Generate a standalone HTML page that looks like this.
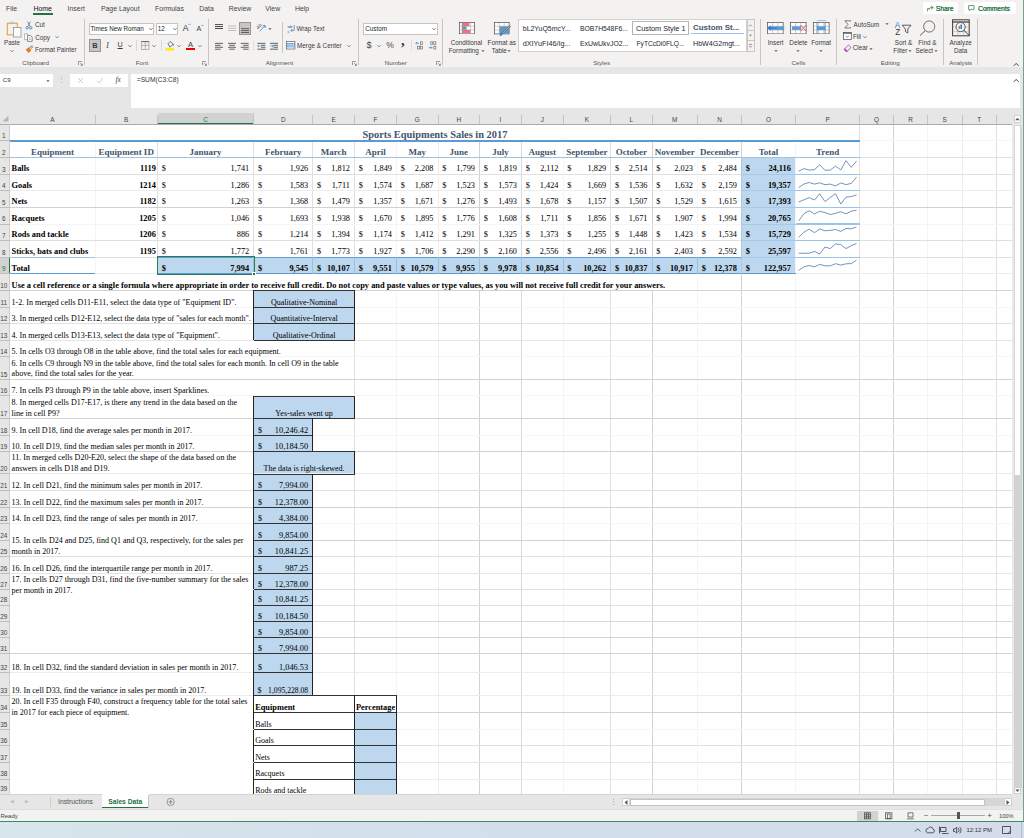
<!DOCTYPE html>
<html lang="en"><head><meta charset="utf-8"><title>Sports Equipments Sales in 2017 - Excel</title>
<style>
html,body{margin:0;padding:0}
body{width:1024px;height:838px;position:relative;overflow:hidden;background:#F3F2F1;font-family:"Liberation Sans",sans-serif;color:#000}
#app div,#app span,#app svg{position:absolute;box-sizing:border-box}
#app span{white-space:nowrap}
.s{font-family:"Liberation Serif",serif;color:#000}
.sb{font-family:"Liberation Serif",serif;font-weight:bold;color:#000}
.u{font-family:"Liberation Sans",sans-serif;color:#333}
.ub{font-family:"Liberation Sans",sans-serif;font-weight:bold;color:#333}
</style></head><body><div id="app">
<span class="u" style="top:4px;line-height:10px;font-size:6.9px;left:6.09px;color:#444;">File</span>
<span class="u" style="top:4px;line-height:10px;font-size:6.9px;left:33.45px;color:#111;">Home</span>
<span class="u" style="top:4px;line-height:10px;font-size:6.9px;left:67.62px;color:#444;">Insert</span>
<span class="u" style="top:4px;line-height:10px;font-size:6.9px;left:100.88px;color:#444;">Page Layout</span>
<span class="u" style="top:4px;line-height:10px;font-size:6.9px;left:155.12px;color:#444;">Formulas</span>
<span class="u" style="top:4px;line-height:10px;font-size:6.9px;left:199.31px;color:#444;">Data</span>
<span class="u" style="top:4px;line-height:10px;font-size:6.9px;left:228.69px;color:#444;">Review</span>
<span class="u" style="top:4px;line-height:10px;font-size:6.9px;left:265.33px;color:#444;">View</span>
<span class="u" style="top:4px;line-height:10px;font-size:6.9px;left:294.95px;color:#444;">Help</span>
<div style="left:33.00px;top:13.45px;width:20.00px;height:1.30px;background:#217346;"></div>
<div style="left:923.30px;top:2.10px;width:34.80px;height:12.00px;background:#fff;border-radius:1.5px;"></div>
<div style="left:964.00px;top:2.10px;width:52.00px;height:12.00px;background:#fff;border-radius:1.5px;"></div>
<svg style="left:926.50px;top:4.50px" width="7" height="7" viewBox="0 0 7 7"><g fill="none" stroke="#217346" stroke-width="0.7"><path d="M0.6 6.4V3.4H2.4M4 0.8L6.2 2.6L4 4.4M6.2 2.6H3.6Q2.4 2.8 2.4 4.6"/></g></svg>
<span class="u" style="top:4px;line-height:10px;font-size:6.6px;left:935.84px;color:#217346;text-shadow:0.2px 0 0 #217346;">Share</span>
<svg style="left:967.70px;top:4.80px" width="7" height="7" viewBox="0 0 7 7"><path d="M0.6 0.6H6V4.4H3L1.6 5.8V4.4H0.6Z" fill="none" stroke="#217346" stroke-width="0.7"/></svg>
<span class="u" style="top:4px;line-height:10px;font-size:6.6px;left:977.95px;color:#217346;text-shadow:0.2px 0 0 #217346;">Comments</span>
<div style="left:84.25px;top:18.50px;width:0.90px;height:46.10px;background:#C8C6C4;"></div>
<div style="left:208.05px;top:18.50px;width:0.90px;height:46.10px;background:#C8C6C4;"></div>
<div style="left:358.25px;top:18.50px;width:0.90px;height:46.10px;background:#C8C6C4;"></div>
<div style="left:441.95px;top:18.50px;width:0.90px;height:46.10px;background:#C8C6C4;"></div>
<div style="left:760.05px;top:18.50px;width:0.90px;height:46.10px;background:#C8C6C4;"></div>
<div style="left:836.05px;top:18.50px;width:0.90px;height:46.10px;background:#C8C6C4;"></div>
<div style="left:943.05px;top:18.50px;width:0.90px;height:46.10px;background:#C8C6C4;"></div>
<div style="left:976.85px;top:18.50px;width:0.90px;height:46.10px;background:#C8C6C4;"></div>
<div style="left:282.15px;top:21.50px;width:0.90px;height:31.20px;background:#C8C6C4;"></div>
<svg style="left:5.50px;top:20.50px" width="16" height="17" viewBox="0 0 16 17"><rect x="1.3" y="2.2" width="10" height="11.6" fill="none" stroke="#E8A33D" stroke-width="1.1"/>
<path d="M4 2.4L6.3 0.6L8.6 2.4Z" fill="#F3F2F1" stroke="#9A9A9A" stroke-width="0.6"/>
<rect x="7.6" y="6.6" width="7.4" height="9.4" fill="#FAFAFA" stroke="#8A8886" stroke-width="0.7"/></svg>
<span class="u" style="top:38px;line-height:9px;font-size:6.3px;left:3.94px;color:#3B3A39;">Paste</span>
<svg style="left:8.50px;top:48.20px" width="6" height="6"><path d="M1.40 2.2L3 3.80L4.60 2.2" fill="none" stroke="#605E5C" stroke-width="0.75"/></svg>
<svg style="left:25.00px;top:20.50px" width="8" height="9" viewBox="0 0 8 9"><path d="M2.6 0.6L5.2 5.6M5.4 0.6L2.8 5.6" stroke="#605E5C" stroke-width="0.7" fill="none"/><circle cx="2.2" cy="6.8" r="1.2" fill="none" stroke="#2B7CD3" stroke-width="0.8"/><circle cx="5.8" cy="6.8" r="1.2" fill="none" stroke="#2B7CD3" stroke-width="0.8"/></svg>
<span class="u" style="top:20px;line-height:9px;font-size:6.3px;left:35.00px;color:#3B3A39;">Cut</span>
<svg style="left:24.00px;top:32.50px" width="10" height="9" viewBox="0 0 10 9"><path d="M0.6 0.8H3.8V6.6H0.6Z" fill="#fff" stroke="#8A8886" stroke-width="0.6"/><path d="M3.6 2.4H6.4L8.2 4.2V8.4H3.6Z" fill="#fff" stroke="#605E5C" stroke-width="0.7"/><path d="M5 5H7M5 6.4H7" stroke="#8A8886" stroke-width="0.5"/></svg>
<span class="u" style="top:33px;line-height:9px;font-size:6.3px;left:35.15px;color:#3B3A39;">Copy</span>
<svg style="left:54.00px;top:34.30px" width="6" height="6"><path d="M1.40 2.2L3 3.80L4.60 2.2" fill="none" stroke="#605E5C" stroke-width="0.75"/></svg>
<svg style="left:24.50px;top:45.00px" width="9" height="9" viewBox="0 0 9 9"><path d="M0.8 4.4L3.8 2.2L6.4 5.6L3.4 8Z" fill="#E97B1F"/><path d="M4.4 2.6L7.4 0.6M5.6 3.6L8.2 1.8" stroke="#605E5C" stroke-width="0.8"/></svg>
<span class="u" style="top:45px;line-height:9px;font-size:6.3px;left:34.97px;color:#3B3A39;">Format Painter</span>
<span class="u" style="top:58px;line-height:9px;font-size:6.2px;left:-264.40px;width:600px;text-align:center;color:#55534F;">Clipboard</span>
<svg style="left:77.50px;top:61.10px" width="5" height="5"><path d="M0.5 4V0.5H4M2.2 2.2L4.4 4.4M4.4 2.6V4.4H2.6" fill="none" stroke="#605E5C" stroke-width="0.6"/></svg>
<div style="left:89.00px;top:22.50px;width:65.20px;height:12.20px;background:#fff;border:0.7px solid #C6C4C2;"></div>
<span class="u" style="top:24px;line-height:9px;font-size:6.3px;left:90.49px;color:#201F1E;">Times New Roman</span>
<svg style="left:148.20px;top:25.60px" width="6" height="6"><path d="M1.40 2.2L3 3.80L4.60 2.2" fill="none" stroke="#444" stroke-width="0.75"/></svg>
<div style="left:156.20px;top:22.50px;width:22.30px;height:12.20px;background:#fff;border:0.7px solid #C6C4C2;"></div>
<span class="u" style="top:24px;line-height:9px;font-size:6.3px;left:157.80px;color:#201F1E;">12</span>
<svg style="left:172.20px;top:25.60px" width="6" height="6"><path d="M1.40 2.2L3 3.80L4.60 2.2" fill="none" stroke="#444" stroke-width="0.75"/></svg>
<span class="u" style="top:22px;line-height:12px;font-size:8.6px;left:-114.50px;width:600px;text-align:center;color:#3B3A39;">A</span>
<svg style="left:188.20px;top:23.30px" width="3" height="3" viewBox="0 0 3 3"><path d="M0.3 2L1.5 0.8L2.7 2" fill="none" stroke="#2B7CD3" stroke-width="0.6"/></svg>
<span class="u" style="top:24px;line-height:10px;font-size:7.2px;left:-101.20px;width:600px;text-align:center;color:#3B3A39;">A</span>
<svg style="left:201.00px;top:23.50px" width="3" height="3" viewBox="0 0 3 3"><path d="M0.3 0.8L1.5 2L2.7 0.8" fill="none" stroke="#2B7CD3" stroke-width="0.6"/></svg>
<div style="left:89.00px;top:39.00px;width:11.70px;height:12.60px;background:#C8C6C4;border:0.7px solid #979593;"></div>
<span class="ub" style="top:40px;line-height:11px;font-size:7.4px;left:-205.20px;width:600px;text-align:center;color:#3B3A39;">B</span>
<span class="s" style="top:40px;line-height:11px;font-size:7.6px;left:-192.40px;width:600px;text-align:center;color:#3B3A39;font-style:italic;">I</span>
<span class="u" style="top:40px;line-height:10px;font-size:7.2px;left:-179.80px;width:600px;text-align:center;color:#3B3A39;text-decoration:underline;">U</span>
<svg style="left:126.60px;top:43.00px" width="6" height="6"><path d="M1.40 2.2L3 3.80L4.60 2.2" fill="none" stroke="#605E5C" stroke-width="0.75"/></svg>
<div style="left:136.10px;top:40.00px;width:0.80px;height:11.00px;background:#DAD8D6;"></div>
<svg style="left:141.00px;top:40.60px" width="9" height="9" viewBox="0 0 9 9"><rect x="0.6" y="0.6" width="7.4" height="8" fill="none" stroke="#9C9A98" stroke-width="0.7"/><path d="M4.3 0.6V8.6M0.6 4.4H8" stroke="#9C9A98" stroke-width="0.7"/><path d="M0.6 0.6H8" stroke="#555" stroke-width="0.8"/></svg>
<svg style="left:151.40px;top:43.00px" width="6" height="6"><path d="M1.40 2.2L3 3.80L4.60 2.2" fill="none" stroke="#605E5C" stroke-width="0.75"/></svg>
<div style="left:161.10px;top:40.00px;width:0.80px;height:11.00px;background:#DAD8D6;"></div>
<svg style="left:165.00px;top:39.50px" width="10" height="11" viewBox="0 0 10 11"><path d="M3 3.6L5.2 1.4L8 4.2L5 7.2Z" fill="none" stroke="#4A4846" stroke-width="0.75"/><path d="M7.6 3.4Q9 5 8.2 6" stroke="#2B7CD3" stroke-width="0.8" fill="none"/><rect x="0.3" y="8.2" width="8.8" height="2.3" fill="#FFEB00"/></svg>
<svg style="left:176.20px;top:43.00px" width="6" height="6"><path d="M1.40 2.2L3 3.80L4.60 2.2" fill="none" stroke="#605E5C" stroke-width="0.75"/></svg>
<span class="u" style="top:39px;line-height:11px;font-size:7.6px;left:-109.40px;width:600px;text-align:center;color:#3B3A39;">A</span>
<div style="left:186.20px;top:47.70px;width:8.80px;height:2.30px;background:#F00000;"></div>
<svg style="left:197.00px;top:43.00px" width="6" height="6"><path d="M1.40 2.2L3 3.80L4.60 2.2" fill="none" stroke="#605E5C" stroke-width="0.75"/></svg>
<span class="u" style="top:58px;line-height:9px;font-size:6.2px;left:-158.00px;width:600px;text-align:center;color:#55534F;">Font</span>
<svg style="left:202.00px;top:61.10px" width="5" height="5"><path d="M0.5 4V0.5H4M2.2 2.2L4.4 4.4M4.4 2.6V4.4H2.6" fill="none" stroke="#605E5C" stroke-width="0.6"/></svg>
<svg style="left:0;top:0" width="1024" height="70"><path d="M215.00 24.60H223.00M215.00 26.55H223.00M215.00 28.50H223.00" stroke="#3B3A39" stroke-width="0.9" fill="none"/></svg>
<svg style="left:0;top:0" width="1024" height="70"><path d="M228.00 25.90H236.00M228.00 28.30H236.00M228.00 30.50H236.00" stroke="#B5B3B1" stroke-width="0.8" fill="none"/></svg>
<div style="left:239.00px;top:22.00px;width:12.00px;height:12.70px;background:#C8C6C4;border:0.7px solid #979593;"></div>
<svg style="left:0;top:0" width="1024" height="70"><path d="M241.00 28.70H249.00M241.00 30.60H249.00M241.00 32.50H249.00" stroke="#55534F" stroke-width="0.9" fill="none"/></svg>
<svg style="left:257.00px;top:23.00px" width="10" height="10" viewBox="0 0 10 10"><text x="0.2" y="5.2" font-size="5" font-family="Liberation Sans, sans-serif" fill="#4A4846" transform="rotate(-35 2 5)">ab</text><path d="M2.6 8.2L8 2.8M8.2 5V2.6H5.8" fill="none" stroke="#2B7CD3" stroke-width="0.8"/></svg>
<svg style="left:266.50px;top:25.80px" width="6" height="6"><path d="M1.4 2.2H4.6L3 4Z" fill="#605E5C"/></svg>
<svg style="left:287.00px;top:23.50px" width="9" height="10" viewBox="0 0 9 10"><text x="0.6" y="3.8" font-size="4.4" font-family="Liberation Sans, sans-serif" fill="#4A4846">ab</text><text x="0.6" y="8.6" font-size="4.4" font-family="Liberation Sans, sans-serif" fill="#4A4846">c</text><path d="M7.2 1V6.4H3.8M5.2 5L3.8 6.4L5.2 7.8" fill="none" stroke="#2B7CD3" stroke-width="0.7"/></svg>
<span class="u" style="top:24px;line-height:9px;font-size:6.3px;left:296.44px;color:#3B3A39;">Wrap Text</span>
<svg style="left:0;top:0" width="1024" height="70"><path d="M215.00 43.35H223.00M215.00 45.30H220.60M215.00 47.25H223.00M215.00 49.20H220.60" stroke="#4A4846" stroke-width="0.85" fill="none"/></svg>
<svg style="left:0;top:0" width="1024" height="70"><path d="M228.00 43.35H236.00M229.20 45.30H234.80M228.00 47.25H236.00M229.20 49.20H234.80" stroke="#4A4846" stroke-width="0.85" fill="none"/></svg>
<svg style="left:0;top:0" width="1024" height="70"><path d="M240.70 43.35H248.70M243.10 45.30H248.70M240.70 47.25H248.70M243.10 49.20H248.70" stroke="#4A4846" stroke-width="0.85" fill="none"/></svg>
<div style="left:253.20px;top:40.00px;width:0.80px;height:11.00px;background:#E1DFDD;"></div>
<svg style="left:0;top:0" width="1024" height="70"><path d="M257.40 43.35H265.40M257.40 49.20H265.40" stroke="#4A4846" stroke-width="0.85" fill="none"/></svg>
<svg style="left:0;top:0" width="1024" height="70"><path d="M261.00 45.30H265.40M261.00 47.25H265.40" stroke="#4A4846" stroke-width="0.85" fill="none"/></svg>
<svg style="left:257.00px;top:44.30px" width="4" height="4" viewBox="0 0 4 4"><path d="M3.6 2H0.6M1.8 0.8L0.6 2L1.8 3.2" fill="none" stroke="#2B7CD3" stroke-width="0.7"/></svg>
<svg style="left:0;top:0" width="1024" height="70"><path d="M270.00 43.35H278.00M270.00 49.20H278.00" stroke="#4A4846" stroke-width="0.85" fill="none"/></svg>
<svg style="left:0;top:0" width="1024" height="70"><path d="M273.60 45.30H278.00M273.60 47.25H278.00" stroke="#4A4846" stroke-width="0.85" fill="none"/></svg>
<svg style="left:269.60px;top:44.30px" width="4" height="4" viewBox="0 0 4 4"><path d="M0.4 2H3.4M2.2 0.8L3.4 2L2.2 3.2" fill="none" stroke="#2B7CD3" stroke-width="0.7"/></svg>
<svg style="left:286.00px;top:40.60px" width="10" height="9" viewBox="0 0 10 9"><rect x="0.5" y="0.6" width="8.4" height="7.4" fill="#fff" stroke="#605E5C" stroke-width="0.7"/><rect x="1" y="2.4" width="7.4" height="3.6" fill="#DCEBFA" stroke="#2B7CD3" stroke-width="0.6"/><path d="M2.4 4.2H7M3.4 3.2L2.4 4.2L3.4 5.2M6 3.2L7 4.2L6 5.2" fill="none" stroke="#2B7CD3" stroke-width="0.5"/></svg>
<span class="u" style="top:41px;line-height:9px;font-size:6.3px;left:297.06px;color:#3B3A39;">Merge &amp; Center</span>
<svg style="left:346.40px;top:43.00px" width="6" height="6"><path d="M1.40 2.2L3 3.80L4.60 2.2" fill="none" stroke="#605E5C" stroke-width="0.75"/></svg>
<span class="u" style="top:58px;line-height:9px;font-size:6.2px;left:-20.60px;width:600px;text-align:center;color:#55534F;">Alignment</span>
<svg style="left:351.80px;top:61.10px" width="5" height="5"><path d="M0.5 4V0.5H4M2.2 2.2L4.4 4.4M4.4 2.6V4.4H2.6" fill="none" stroke="#605E5C" stroke-width="0.6"/></svg>
<div style="left:363.10px;top:22.50px;width:74.70px;height:12.20px;background:#fff;border:0.7px solid #C6C4C2;"></div>
<span class="u" style="top:24px;line-height:9px;font-size:6.3px;left:365.20px;color:#201F1E;">Custom</span>
<svg style="left:431.40px;top:25.60px" width="6" height="6"><path d="M1.40 2.2L3 3.80L4.60 2.2" fill="none" stroke="#444" stroke-width="0.75"/></svg>
<span class="u" style="top:39px;line-height:13px;font-size:9.2px;left:69.00px;width:600px;text-align:center;color:#4A4846;">$</span>
<svg style="left:375.50px;top:43.00px" width="6" height="6"><path d="M1.40 2.2L3 3.80L4.60 2.2" fill="none" stroke="#605E5C" stroke-width="0.75"/></svg>
<span class="u" style="top:39px;line-height:12px;font-size:8.6px;left:90.00px;width:600px;text-align:center;color:#4A4846;">%</span>
<span class="sb" style="top:30px;line-height:20px;font-size:15px;left:102.80px;width:600px;text-align:center;color:#3B3A39;">,</span>
<div style="left:411.10px;top:40.00px;width:0.80px;height:11.00px;background:#E1DFDD;"></div>
<svg style="left:414.60px;top:40.60px" width="9" height="10" viewBox="0 0 9 10"><path d="M4 2.2H0.8M2 1L0.8 2.2L2 3.4" fill="none" stroke="#2B7CD3" stroke-width="0.7"/><g fill="none" stroke="#605E5C" stroke-width="0.6"><rect x="5.4" y="0.8" width="2" height="2.8"/><rect x="2.6" y="5.2" width="2" height="2.8"/><rect x="5.6" y="5.2" width="2" height="2.8"/></g></svg>
<svg style="left:427.60px;top:40.60px" width="9" height="10" viewBox="0 0 9 10"><path d="M0.8 6.6H4M2.8 5.4L4 6.6L2.8 7.8" fill="none" stroke="#2B7CD3" stroke-width="0.7"/><g fill="none" stroke="#605E5C" stroke-width="0.6"><rect x="2.8" y="0.8" width="2" height="2.8"/><rect x="5.8" y="0.8" width="2" height="2.8"/><rect x="5.8" y="5.2" width="2" height="2.8"/></g></svg>
<span class="u" style="top:58px;line-height:9px;font-size:6.2px;left:95.80px;width:600px;text-align:center;color:#55534F;">Number</span>
<svg style="left:435.50px;top:61.10px" width="5" height="5"><path d="M0.5 4V0.5H4M2.2 2.2L4.4 4.4M4.4 2.6V4.4H2.6" fill="none" stroke="#605E5C" stroke-width="0.6"/></svg>
<svg style="left:458.50px;top:21.80px" width="16" height="12.5" viewBox="0 0 16 12.5"><rect x="0.5" y="0.5" width="15" height="11.4" fill="#fff" stroke="#4A4846" stroke-width="0.7"/>
<rect x="3" y="0.8" width="7.4" height="3.4" fill="#F1707B"/><rect x="3" y="4.4" width="4.6" height="3.4" fill="#5B9BD5"/><rect x="3" y="8" width="8.4" height="3.4" fill="#F1707B"/>
<path d="M3 0.5V11.9M11.6 0.5V11.9M0.5 4.3H15.5M0.5 7.9H15.5" stroke="#8A8886" stroke-width="0.4" fill="none"/></svg>
<span class="u" style="top:38px;line-height:9px;font-size:6.3px;left:450.74px;color:#3B3A39;">Conditional</span>
<span class="u" style="top:46px;line-height:9px;font-size:6.3px;left:448.74px;color:#3B3A39;">Formatting</span>
<svg style="left:479.60px;top:48.20px" width="6" height="6"><path d="M1.4 2.2H4.6L3 4Z" fill="#605E5C"/></svg>
<svg style="left:493.50px;top:21.80px" width="18" height="15" viewBox="0 0 18 15"><rect x="0.5" y="0.5" width="14.6" height="11.4" fill="#fff" stroke="#4A4846" stroke-width="0.7"/>
<rect x="5.4" y="4.3" width="9.6" height="7.4" fill="#5B9BD5"/>
<path d="M5.4 0.5V11.9M10.2 0.5V11.9M0.5 4.3H15M0.5 8H15" stroke="#8A8886" stroke-width="0.4" fill="none"/>
<path d="M16.4 3.8L8.4 11.4" stroke="#605E5C" stroke-width="1.6"/><path d="M16.4 3.8L8.4 11.4" stroke="#EDEBE9" stroke-width="0.6"/><path d="M8.6 11L6 13.6" stroke="#2B7CD3" stroke-width="1.8"/></svg>
<span class="u" style="top:38px;line-height:9px;font-size:6.3px;left:487.62px;color:#3B3A39;">Format as</span>
<span class="u" style="top:46px;line-height:9px;font-size:6.3px;left:491.77px;color:#3B3A39;">Table</span>
<svg style="left:506.30px;top:48.20px" width="6" height="6"><path d="M1.4 2.2H4.6L3 4Z" fill="#605E5C"/></svg>
<div style="left:518.00px;top:19.30px;width:228.60px;height:32.90px;background:#fff;border:0.6px solid #D2D0CE;"></div>
<div style="left:746.50px;top:19.30px;width:8.00px;height:32.90px;background:#F3F2F1;border:0.6px solid #C8C6C4;"></div>
<div style="left:746.50px;top:29.95px;width:8.00px;height:0.70px;background:#C8C6C4;"></div>
<div style="left:746.50px;top:39.95px;width:8.00px;height:0.70px;background:#C8C6C4;"></div>
<svg style="left:748.00px;top:22.60px" width="5" height="5" viewBox="0 0 5 5"><path d="M1 3.4L2.5 1.8L4 3.4" fill="none" stroke="#605E5C" stroke-width="0.6"/></svg>
<svg style="left:748.00px;top:33.00px" width="5" height="5" viewBox="0 0 5 5"><path d="M1.2 1.8H3.8L2.5 3.2Z" fill="#605E5C"/></svg>
<svg style="left:748.00px;top:43.00px" width="5" height="7" viewBox="0 0 5 7"><path d="M1 1.4H4" stroke="#605E5C" stroke-width="0.6"/><path d="M1 2.8L2.5 4.4L4 2.8" fill="none" stroke="#605E5C" stroke-width="0.6"/></svg>
<span class="u" style="top:24px;line-height:10px;font-size:6.94px;left:522.80px;color:#23262F;">bL2YuQ5mcY...</span>
<span class="u" style="top:24px;line-height:10px;font-size:6.8px;left:580.00px;color:#23262F;">BOB7H548F6...</span>
<span class="u" style="top:23px;line-height:11px;font-size:7.3px;left:636.00px;color:#23262F;">Custom Style 1</span>
<div style="left:632.30px;top:20.90px;width:56.60px;height:14.60px;border:0.9px solid #B4B4B4;"></div>
<span class="ub" style="top:22px;line-height:11px;font-size:7.95px;left:693.00px;color:#44546A;">Custom St...</span>
<div style="left:691.20px;top:33.05px;width:52.80px;height:0.90px;background:#9DC3E6;"></div>
<span class="u" style="top:38px;line-height:11px;font-size:7.21px;left:522.80px;color:#23262F;">dXIYuFI46/Ig...</span>
<span class="u" style="top:39px;line-height:10px;font-size:6.93px;left:580.00px;color:#23262F;">ExUwUkvJO2...</span>
<span class="u" style="top:39px;line-height:10px;font-size:6.65px;left:636.50px;color:#23262F;">FyTCcDi0FLQ...</span>
<span class="u" style="top:39px;line-height:10px;font-size:7.11px;left:693.00px;color:#23262F;">HbW4G2mgt...</span>
<span class="u" style="top:58px;line-height:9px;font-size:6.2px;left:301.60px;width:600px;text-align:center;color:#55534F;">Styles</span>
<svg style="left:767.30px;top:21.80px" width="18" height="12.5" viewBox="0 0 18 12.5"><rect x="0.5" y="0.5" width="15.6" height="11.4" fill="#fff" stroke="#4A4846" stroke-width="0.7"/>
<path d="M5.6 0.5V11.9M10.9 0.5V11.9M0.5 4.3H16.1M0.5 8H16.1" stroke="#8A8886" stroke-width="0.45" fill="none"/><rect x="2.6" y="4.4" width="14.6" height="3.5" fill="#5B9BD5"/><path d="M3.6 3.4L0.2 6.1L3.6 8.8Z" fill="#2B7CD3"/><path d="M0.4 6.1H10" stroke="#2B7CD3" stroke-width="1.2"/></svg>
<svg style="left:790.40px;top:21.80px" width="18" height="12.5" viewBox="0 0 18 12.5"><rect x="0.5" y="0.5" width="15.6" height="11.4" fill="#fff" stroke="#4A4846" stroke-width="0.7"/>
<path d="M5.6 0.5V11.9M10.9 0.5V11.9M0.5 4.3H16.1M0.5 8H16.1" stroke="#8A8886" stroke-width="0.45" fill="none"/><rect x="2" y="4.4" width="9" height="3.5" fill="#5B9BD5"/><path d="M10.4 3L16.4 9.4M16.4 3L10.4 9.4" stroke="#E8505B" stroke-width="0.9"/></svg>
<svg style="left:812.80px;top:21.80px" width="18" height="12.5" viewBox="0 0 18 12.5"><rect x="0.5" y="0.5" width="15.6" height="11.4" fill="#fff" stroke="#4A4846" stroke-width="0.7"/>
<path d="M5.6 0.5V11.9M10.9 0.5V11.9M0.5 4.3H16.1M0.5 8H16.1" stroke="#8A8886" stroke-width="0.45" fill="none"/><rect x="4" y="4.4" width="8.2" height="3.6" fill="#5B9BD5"/><path d="M4 0.5V11.9M12.2 0.5V11.9" stroke="#2B7CD3" stroke-width="0.7"/></svg>
<div style="left:816.50px;top:19.65px;width:9.00px;height:0.70px;background:#9DC3E6;"></div>
<span class="u" style="top:38px;line-height:9px;font-size:6.3px;left:767.87px;color:#3B3A39;">Insert</span>
<span class="u" style="top:38px;line-height:9px;font-size:6.3px;left:789.34px;color:#3B3A39;">Delete</span>
<span class="u" style="top:38px;line-height:9px;font-size:6.3px;left:811.17px;color:#3B3A39;">Format</span>
<svg style="left:772.60px;top:48.20px" width="6" height="6"><path d="M1.4 2.2H4.6L3 4Z" fill="#605E5C"/></svg>
<svg style="left:795.10px;top:48.20px" width="6" height="6"><path d="M1.4 2.2H4.6L3 4Z" fill="#605E5C"/></svg>
<svg style="left:817.90px;top:48.20px" width="6" height="6"><path d="M1.4 2.2H4.6L3 4Z" fill="#605E5C"/></svg>
<span class="u" style="top:58px;line-height:9px;font-size:6.2px;left:498.50px;width:600px;text-align:center;color:#55534F;">Cells</span>
<svg style="left:843.50px;top:20.00px" width="8" height="9" viewBox="0 0 8 9"><path d="M6.6 1.6V0.8H0.8L4 4.4L0.8 8H6.6V7.2" fill="none" stroke="#4A4846" stroke-width="0.7"/></svg>
<span class="u" style="top:20px;line-height:9px;font-size:6.3px;left:853.44px;color:#3B3A39;">AutoSum</span>
<svg style="left:883.60px;top:21.20px" width="6" height="6"><path d="M1.4 2.2H4.6L3 4Z" fill="#605E5C"/></svg>
<svg style="left:842.80px;top:31.80px" width="9" height="8" viewBox="0 0 9 8"><rect x="0.5" y="0.5" width="7.8" height="7" fill="#fff" stroke="#4A4846" stroke-width="0.7"/><path d="M0.5 1.2H8.3" stroke="#4A4846" stroke-width="1"/><path d="M3 3.8L4.4 5.4L5.8 3.8" fill="none" stroke="#2B7CD3" stroke-width="0.8"/></svg>
<span class="u" style="top:32px;line-height:9px;font-size:6.3px;left:852.98px;color:#3B3A39;">Fill</span>
<svg style="left:861.60px;top:33.80px" width="6" height="6"><path d="M1.40 2.2L3 3.80L4.60 2.2" fill="none" stroke="#605E5C" stroke-width="0.75"/></svg>
<svg style="left:842.80px;top:43.50px" width="9" height="9" viewBox="0 0 9 9"><path d="M1 5.4L5.6 1L8 3.4L3.6 8Z" fill="#F7E8FA" stroke="#A33BB8" stroke-width="0.8"/><path d="M1 5.4L3.6 8L4.6 7L2 4.4Z" fill="#A33BB8"/></svg>
<span class="u" style="top:43px;line-height:9px;font-size:6.3px;left:852.72px;color:#3B3A39;">Clear</span>
<svg style="left:868.00px;top:45.50px" width="6" height="6"><path d="M1.4 2.2H4.6L3 4Z" fill="#605E5C"/></svg>
<svg style="left:894.00px;top:19.50px" width="18" height="17" viewBox="0 0 18 17"><text x="0.8" y="8" font-size="8.2" font-family="Liberation Sans, sans-serif" fill="#2B7CD3">A</text><text x="1.2" y="15.4" font-size="8.2" font-family="Liberation Sans, sans-serif" fill="#3B3A39">Z</text><path d="M8.2 5.2H17L13.8 9V13L11.4 11.6V9Z" fill="none" stroke="#3B3A39" stroke-width="0.8"/></svg>
<span class="u" style="top:38px;line-height:9px;font-size:6.3px;left:894.75px;color:#3B3A39;">Sort &amp;</span>
<span class="u" style="top:46px;line-height:9px;font-size:6.3px;left:893.30px;color:#3B3A39;">Filter</span>
<svg style="left:907.40px;top:47.90px" width="6" height="6"><path d="M1.4 2.2H4.6L3 4Z" fill="#605E5C"/></svg>
<svg style="left:918.50px;top:19.50px" width="18" height="17" viewBox="0 0 18 17"><circle cx="10.2" cy="6.5" r="5.6" fill="none" stroke="#4A4846" stroke-width="0.75"/><path d="M6.2 10.6L1 15.6" stroke="#4A4846" stroke-width="0.9"/></svg>
<span class="u" style="top:38px;line-height:9px;font-size:6.3px;left:918.25px;color:#3B3A39;">Find &amp;</span>
<span class="u" style="top:46px;line-height:9px;font-size:6.3px;left:915.54px;color:#3B3A39;">Select</span>
<svg style="left:932.60px;top:47.90px" width="6" height="6"><path d="M1.4 2.2H4.6L3 4Z" fill="#605E5C"/></svg>
<span class="u" style="top:58px;line-height:9px;font-size:6.2px;left:590.20px;width:600px;text-align:center;color:#55534F;">Editing</span>
<svg style="left:951.50px;top:18.80px" width="19" height="18" viewBox="0 0 19 18"><rect x="0.6" y="0.8" width="16.6" height="16" fill="#F3F2F1" stroke="#3B3A39" stroke-width="1"/>
<path d="M0.6 3H17.2" stroke="#3B3A39" stroke-width="1.2"/>
<path d="M6 3V16.8M11.6 3V16.8M0.6 8H17.2M0.6 12.6H17.2" stroke="#A19F9D" stroke-width="0.5"/>
<circle cx="8.6" cy="8" r="4.6" fill="#F3F2F1" stroke="#3B3A39" stroke-width="0.8"/>
<rect x="6.6" y="7" width="1.4" height="3" fill="#8A8886"/><rect x="8.4" y="5.6" width="1.6" height="4.4" fill="#2B7CD3"/>
<path d="M12 11.4L17.4 16.6" stroke="#3B3A39" stroke-width="0.9"/></svg>
<span class="u" style="top:38px;line-height:9px;font-size:6.3px;left:949.39px;color:#3B3A39;">Analyze</span>
<span class="u" style="top:46px;line-height:9px;font-size:6.3px;left:954.05px;color:#3B3A39;">Data</span>
<span class="u" style="top:58px;line-height:9px;font-size:6.2px;left:660.70px;width:600px;text-align:center;color:#55534F;">Analysis</span>
<svg style="left:1013.00px;top:61.80px" width="7" height="5" viewBox="0 0 7 5"><path d="M0.8 3.8L3.2 1.4L5.6 3.8" fill="none" stroke="#333" stroke-width="0.95"/></svg>
<div style="left:0.00px;top:67.40px;width:1024.00px;height:46.00px;background:#E6E6E6;"></div>
<div style="left:0.00px;top:67.20px;width:1024.00px;height:1.20px;background:linear-gradient(#EDECEB,#E2E1E0);"></div>
<div style="left:0.00px;top:73.70px;width:53.00px;height:13.40px;background:#fff;"></div>
<span class="u" style="top:75px;line-height:9px;font-size:6.1px;left:2.80px;color:#333;">C9</span>
<svg style="left:44.60px;top:77.60px" width="6" height="6"><path d="M1.4 2.2H4.6L3 4Z" fill="#555"/></svg>
<span class="u" style="top:75px;line-height:10px;font-size:7px;left:-238.60px;width:600px;text-align:center;color:#A6A6A6;">⋮</span>
<div style="left:69.50px;top:73.70px;width:58.50px;height:13.40px;background:#fff;"></div>
<svg style="left:76.50px;top:77.20px" width="7" height="7" viewBox="0 0 7 7"><path d="M1 1L6 6M6 1L1 6" stroke="#B8B8B8" stroke-width="0.7"/></svg>
<svg style="left:95.50px;top:77.20px" width="8" height="7" viewBox="0 0 8 7"><path d="M1 3.8L3 5.8L7 1" fill="none" stroke="#B8B8B8" stroke-width="0.7"/></svg>
<span class="s" style="top:74px;line-height:11px;font-size:7.4px;left:-181.80px;width:600px;text-align:center;color:#444;font-style:italic;">fx</span>
<div style="left:130.50px;top:73.70px;width:889.00px;height:34.80px;background:#fff;"></div>
<span class="u" style="top:75px;line-height:10px;font-size:6.66px;left:136.80px;color:#333;">=SUM(C3:C8)</span>
<svg style="left:1013.00px;top:78.00px" width="7" height="5" viewBox="0 0 7 5"><path d="M0.8 3.8L3.2 1.4L5.6 3.8" fill="none" stroke="#333" stroke-width="0.95"/></svg>
<div style="left:0.00px;top:113.00px;width:1012.00px;height:681.00px;background:#fff;"></div>
<div style="left:157.50px;top:257.20px;width:638.00px;height:16.40px;background:#BDD7EE;"></div>
<div style="left:741.50px;top:157.70px;width:54.00px;height:115.90px;background:#BDD7EE;"></div>
<div style="left:253.75px;top:290.40px;width:100.75px;height:16.80px;background:#BDD7EE;"></div>
<div style="left:253.75px;top:307.20px;width:100.75px;height:16.00px;background:#BDD7EE;"></div>
<div style="left:253.75px;top:323.20px;width:100.75px;height:17.15px;background:#BDD7EE;"></div>
<div style="left:253.75px;top:395.90px;width:100.75px;height:22.30px;background:#BDD7EE;"></div>
<div style="left:253.75px;top:451.40px;width:100.75px;height:22.50px;background:#BDD7EE;"></div>
<div style="left:253.75px;top:418.20px;width:59.05px;height:17.10px;background:#BDD7EE;"></div>
<div style="left:253.75px;top:435.30px;width:59.05px;height:16.10px;background:#BDD7EE;"></div>
<div style="left:253.75px;top:473.90px;width:59.05px;height:16.80px;background:#BDD7EE;"></div>
<div style="left:253.75px;top:490.70px;width:59.05px;height:16.60px;background:#BDD7EE;"></div>
<div style="left:253.75px;top:507.30px;width:59.05px;height:16.50px;background:#BDD7EE;"></div>
<div style="left:253.75px;top:523.80px;width:59.05px;height:16.30px;background:#BDD7EE;"></div>
<div style="left:253.75px;top:540.10px;width:59.05px;height:16.10px;background:#BDD7EE;"></div>
<div style="left:253.75px;top:556.20px;width:59.05px;height:17.10px;background:#BDD7EE;"></div>
<div style="left:253.75px;top:573.30px;width:59.05px;height:16.20px;background:#BDD7EE;"></div>
<div style="left:253.75px;top:589.50px;width:59.05px;height:15.60px;background:#BDD7EE;"></div>
<div style="left:253.75px;top:605.10px;width:59.05px;height:16.20px;background:#BDD7EE;"></div>
<div style="left:253.75px;top:621.30px;width:59.05px;height:16.30px;background:#BDD7EE;"></div>
<div style="left:253.75px;top:637.60px;width:59.05px;height:16.10px;background:#BDD7EE;"></div>
<div style="left:253.75px;top:653.70px;width:59.05px;height:18.60px;background:#BDD7EE;"></div>
<div style="left:253.75px;top:672.30px;width:59.05px;height:23.40px;background:#BDD7EE;"></div>
<div style="left:354.50px;top:712.30px;width:42.00px;height:81.70px;background:#BDD7EE;"></div>
<div style="left:94.50px;top:124.00px;width:1.00px;height:0.20px;background:#F5F5F5;"></div>
<div style="left:94.50px;top:140.70px;width:1.00px;height:132.90px;background:#F5F5F5;"></div>
<div style="left:157.00px;top:124.00px;width:1.00px;height:0.20px;background:#E0E0E0;"></div>
<div style="left:157.00px;top:140.70px;width:1.00px;height:132.90px;background:#E0E0E0;"></div>
<div style="left:253.25px;top:124.00px;width:1.00px;height:0.20px;background:#E0E0E0;"></div>
<div style="left:253.25px;top:140.70px;width:1.00px;height:132.90px;background:#E0E0E0;"></div>
<div style="left:253.25px;top:290.40px;width:1.00px;height:49.95px;background:#E0E0E0;"></div>
<div style="left:253.25px;top:395.90px;width:1.00px;height:398.10px;background:#E0E0E0;"></div>
<div style="left:312.30px;top:124.00px;width:1.00px;height:0.20px;background:#E0E0E0;"></div>
<div style="left:312.30px;top:140.70px;width:1.00px;height:132.90px;background:#E0E0E0;"></div>
<div style="left:312.30px;top:418.20px;width:1.00px;height:33.20px;background:#E0E0E0;"></div>
<div style="left:312.30px;top:473.90px;width:1.00px;height:221.80px;background:#E0E0E0;"></div>
<div style="left:354.00px;top:124.00px;width:1.00px;height:0.20px;background:#E0E0E0;"></div>
<div style="left:354.00px;top:140.70px;width:1.00px;height:132.90px;background:#E0E0E0;"></div>
<div style="left:354.00px;top:290.40px;width:1.00px;height:503.60px;background:#E0E0E0;"></div>
<div style="left:396.00px;top:124.00px;width:1.00px;height:0.20px;background:#F5F5F5;"></div>
<div style="left:396.00px;top:140.70px;width:1.00px;height:132.90px;background:#F5F5F5;"></div>
<div style="left:396.00px;top:290.40px;width:1.00px;height:503.60px;background:#F5F5F5;"></div>
<div style="left:437.50px;top:124.00px;width:1.00px;height:0.20px;background:#ECECEC;"></div>
<div style="left:437.50px;top:140.70px;width:1.00px;height:132.90px;background:#ECECEC;"></div>
<div style="left:437.50px;top:290.40px;width:1.00px;height:503.60px;background:#ECECEC;"></div>
<div style="left:479.00px;top:124.00px;width:1.00px;height:0.20px;background:#D2D2D2;"></div>
<div style="left:479.00px;top:140.70px;width:1.00px;height:132.90px;background:#D2D2D2;"></div>
<div style="left:479.00px;top:290.40px;width:1.00px;height:503.60px;background:#D2D2D2;"></div>
<div style="left:521.00px;top:124.00px;width:1.00px;height:0.20px;background:#D9D9D9;"></div>
<div style="left:521.00px;top:140.70px;width:1.00px;height:132.90px;background:#D9D9D9;"></div>
<div style="left:521.00px;top:290.40px;width:1.00px;height:503.60px;background:#D9D9D9;"></div>
<div style="left:562.50px;top:124.00px;width:1.00px;height:0.20px;background:#F5F5F5;"></div>
<div style="left:562.50px;top:140.70px;width:1.00px;height:132.90px;background:#F5F5F5;"></div>
<div style="left:562.50px;top:290.40px;width:1.00px;height:503.60px;background:#F5F5F5;"></div>
<div style="left:610.25px;top:124.00px;width:1.00px;height:0.20px;background:#E0E0E0;"></div>
<div style="left:610.25px;top:140.70px;width:1.00px;height:132.90px;background:#E0E0E0;"></div>
<div style="left:610.25px;top:290.40px;width:1.00px;height:503.60px;background:#E0E0E0;"></div>
<div style="left:651.50px;top:124.00px;width:1.00px;height:0.20px;background:#D2D2D2;"></div>
<div style="left:651.50px;top:140.70px;width:1.00px;height:132.90px;background:#D2D2D2;"></div>
<div style="left:651.50px;top:290.40px;width:1.00px;height:503.60px;background:#D2D2D2;"></div>
<div style="left:697.00px;top:124.00px;width:1.00px;height:0.20px;background:#F5F5F5;"></div>
<div style="left:697.00px;top:140.70px;width:1.00px;height:653.30px;background:#F5F5F5;"></div>
<div style="left:741.00px;top:124.00px;width:1.00px;height:0.20px;background:#D2D2D2;"></div>
<div style="left:741.00px;top:140.70px;width:1.00px;height:653.30px;background:#D2D2D2;"></div>
<div style="left:795.00px;top:124.00px;width:1.00px;height:0.20px;background:#F5F5F5;"></div>
<div style="left:795.00px;top:140.70px;width:1.00px;height:653.30px;background:#F5F5F5;"></div>
<div style="left:859.25px;top:124.00px;width:1.00px;height:670.00px;background:#E0E0E0;"></div>
<div style="left:893.00px;top:124.00px;width:1.00px;height:670.00px;background:#D2D2D2;"></div>
<div style="left:927.00px;top:124.00px;width:1.00px;height:670.00px;background:#F5F5F5;"></div>
<div style="left:961.50px;top:124.00px;width:1.00px;height:670.00px;background:#ECECEC;"></div>
<div style="left:996.00px;top:124.00px;width:1.00px;height:670.00px;background:#E0E0E0;"></div>
<div style="left:10.00px;top:140.20px;width:1002.00px;height:1.00px;background:#F5F5F5;"></div>
<div style="left:10.00px;top:157.20px;width:1002.00px;height:1.00px;background:#E0E0E0;"></div>
<div style="left:10.00px;top:173.75px;width:1002.00px;height:1.00px;background:#E0E0E0;"></div>
<div style="left:10.00px;top:190.20px;width:1002.00px;height:1.00px;background:#ECECEC;"></div>
<div style="left:10.00px;top:206.70px;width:1002.00px;height:1.00px;background:#D2D2D2;"></div>
<div style="left:10.00px;top:223.50px;width:1002.00px;height:1.00px;background:#F5F5F5;"></div>
<div style="left:10.00px;top:239.95px;width:1002.00px;height:1.00px;background:#E0E0E0;"></div>
<div style="left:10.00px;top:256.70px;width:1002.00px;height:1.00px;background:#E0E0E0;"></div>
<div style="left:10.00px;top:273.10px;width:1002.00px;height:1.00px;background:#ECECEC;"></div>
<div style="left:10.00px;top:289.90px;width:1002.00px;height:1.00px;background:#D2D2D2;"></div>
<div style="left:10.00px;top:306.70px;width:1002.00px;height:1.00px;background:#F5F5F5;"></div>
<div style="left:10.00px;top:322.70px;width:1002.00px;height:1.00px;background:#E0E0E0;"></div>
<div style="left:10.00px;top:339.85px;width:1002.00px;height:1.00px;background:#E6E6E6;"></div>
<div style="left:10.00px;top:356.30px;width:1002.00px;height:1.00px;background:#F5F5F5;"></div>
<div style="left:10.00px;top:378.70px;width:1002.00px;height:1.00px;background:#D2D2D2;"></div>
<div style="left:10.00px;top:395.40px;width:1002.00px;height:1.00px;background:#F5F5F5;"></div>
<div style="left:10.00px;top:417.70px;width:1002.00px;height:1.00px;background:#D2D2D2;"></div>
<div style="left:10.00px;top:434.80px;width:1002.00px;height:1.00px;background:#F5F5F5;"></div>
<div style="left:10.00px;top:450.90px;width:1002.00px;height:1.00px;background:#D2D2D2;"></div>
<div style="left:10.00px;top:473.40px;width:1002.00px;height:1.00px;background:#ECECEC;"></div>
<div style="left:10.00px;top:490.20px;width:1002.00px;height:1.00px;background:#E0E0E0;"></div>
<div style="left:10.00px;top:506.80px;width:1002.00px;height:1.00px;background:#D2D2D2;"></div>
<div style="left:10.00px;top:523.30px;width:1002.00px;height:1.00px;background:#F5F5F5;"></div>
<div style="left:253.75px;top:539.60px;width:758.25px;height:1.00px;background:#D2D2D2;"></div>
<div style="left:10.00px;top:555.70px;width:1002.00px;height:1.00px;background:#E0E0E0;"></div>
<div style="left:10.00px;top:572.80px;width:1002.00px;height:1.00px;background:#E6E6E6;"></div>
<div style="left:253.75px;top:589.00px;width:758.25px;height:1.00px;background:#E0E0E0;"></div>
<div style="left:253.75px;top:604.60px;width:758.25px;height:1.00px;background:#E0E0E0;"></div>
<div style="left:253.75px;top:620.80px;width:758.25px;height:1.00px;background:#D9D9D9;"></div>
<div style="left:253.75px;top:637.10px;width:758.25px;height:1.00px;background:#D2D2D2;"></div>
<div style="left:10.00px;top:653.20px;width:1002.00px;height:1.00px;background:#D2D2D2;"></div>
<div style="left:10.00px;top:671.80px;width:1002.00px;height:1.00px;background:#ECECEC;"></div>
<div style="left:10.00px;top:695.20px;width:1002.00px;height:1.00px;background:#ECECEC;"></div>
<div style="left:253.75px;top:711.80px;width:758.25px;height:1.00px;background:#D2D2D2;"></div>
<div style="left:253.75px;top:729.00px;width:758.25px;height:1.00px;background:#F5F5F5;"></div>
<div style="left:253.75px;top:745.30px;width:758.25px;height:1.00px;background:#E0E0E0;"></div>
<div style="left:253.75px;top:762.00px;width:758.25px;height:1.00px;background:#E6E6E6;"></div>
<div style="left:253.75px;top:778.50px;width:758.25px;height:1.00px;background:#ECECEC;"></div>
<div style="left:10.00px;top:139.70px;width:849.75px;height:2.20px;background:#5B9BD5;"></div>
<div style="left:10.00px;top:157.05px;width:849.75px;height:1.30px;background:#9DC3E6;"></div>
<div style="left:10.00px;top:256.65px;width:85.00px;height:1.30px;background:#9DC3E6;"></div>
<div style="left:10.00px;top:272.60px;width:85.00px;height:1.80px;background:#5B9BD5;"></div>
<div style="left:157.50px;top:256.70px;width:638.00px;height:1.20px;background:#5B9BD5;"></div>
<div style="left:157.50px;top:272.60px;width:638.00px;height:1.80px;background:#5B9BD5;"></div>
<div style="left:253.25px;top:257.20px;width:1.00px;height:16.40px;background:#9BBFE0;"></div>
<div style="left:312.30px;top:257.20px;width:1.00px;height:16.40px;background:#9BBFE0;"></div>
<div style="left:354.00px;top:257.20px;width:1.00px;height:16.40px;background:#9BBFE0;"></div>
<div style="left:396.00px;top:257.20px;width:1.00px;height:16.40px;background:#9BBFE0;"></div>
<div style="left:437.50px;top:257.20px;width:1.00px;height:16.40px;background:#9BBFE0;"></div>
<div style="left:479.00px;top:257.20px;width:1.00px;height:16.40px;background:#9BBFE0;"></div>
<div style="left:521.00px;top:257.20px;width:1.00px;height:16.40px;background:#9BBFE0;"></div>
<div style="left:562.50px;top:257.20px;width:1.00px;height:16.40px;background:#9BBFE0;"></div>
<div style="left:610.25px;top:257.20px;width:1.00px;height:16.40px;background:#9BBFE0;"></div>
<div style="left:651.50px;top:257.20px;width:1.00px;height:16.40px;background:#9BBFE0;"></div>
<div style="left:697.00px;top:257.20px;width:1.00px;height:16.40px;background:#9BBFE0;"></div>
<div style="left:741.00px;top:257.20px;width:1.00px;height:16.40px;background:#9BBFE0;"></div>
<div style="left:741.50px;top:173.75px;width:54.00px;height:1.00px;background:#A9C9E8;"></div>
<div style="left:795.50px;top:173.65px;width:64.25px;height:1.20px;background:#9DC3E6;"></div>
<div style="left:741.50px;top:190.20px;width:54.00px;height:1.00px;background:#A9C9E8;"></div>
<div style="left:795.50px;top:190.10px;width:64.25px;height:1.20px;background:#9DC3E6;"></div>
<div style="left:741.50px;top:206.70px;width:54.00px;height:1.00px;background:#A9C9E8;"></div>
<div style="left:795.50px;top:206.60px;width:64.25px;height:1.20px;background:#9DC3E6;"></div>
<div style="left:741.50px;top:223.50px;width:54.00px;height:1.00px;background:#A9C9E8;"></div>
<div style="left:795.50px;top:223.40px;width:64.25px;height:1.20px;background:#9DC3E6;"></div>
<div style="left:741.50px;top:239.95px;width:54.00px;height:1.00px;background:#A9C9E8;"></div>
<div style="left:795.50px;top:239.85px;width:64.25px;height:1.20px;background:#9DC3E6;"></div>
<div style="left:741.50px;top:256.70px;width:54.00px;height:1.00px;background:#A9C9E8;"></div>
<div style="left:795.50px;top:256.60px;width:64.25px;height:1.20px;background:#9DC3E6;"></div>
<div style="left:741.00px;top:157.70px;width:1.00px;height:115.90px;background:#A9C9E8;"></div>
<div style="left:253.75px;top:290.00px;width:101.25px;height:0.80px;background:#333;"></div>
<div style="left:253.75px;top:306.80px;width:101.25px;height:0.80px;background:#333;"></div>
<div style="left:253.25px;top:290.40px;width:1.00px;height:16.80px;background:#222;"></div>
<div style="left:354.00px;top:290.40px;width:1.00px;height:16.80px;background:#222;"></div>
<div style="left:253.75px;top:306.80px;width:101.25px;height:0.80px;background:#333;"></div>
<div style="left:253.75px;top:322.80px;width:101.25px;height:0.80px;background:#333;"></div>
<div style="left:253.25px;top:307.20px;width:1.00px;height:16.00px;background:#222;"></div>
<div style="left:354.00px;top:307.20px;width:1.00px;height:16.00px;background:#222;"></div>
<div style="left:253.75px;top:322.80px;width:101.25px;height:0.80px;background:#333;"></div>
<div style="left:253.75px;top:339.95px;width:101.25px;height:0.80px;background:#333;"></div>
<div style="left:253.25px;top:323.20px;width:1.00px;height:17.15px;background:#222;"></div>
<div style="left:354.00px;top:323.20px;width:1.00px;height:17.15px;background:#222;"></div>
<div style="left:253.75px;top:395.50px;width:101.25px;height:0.80px;background:#333;"></div>
<div style="left:253.75px;top:417.80px;width:101.25px;height:0.80px;background:#333;"></div>
<div style="left:253.25px;top:395.90px;width:1.00px;height:22.30px;background:#222;"></div>
<div style="left:354.00px;top:395.90px;width:1.00px;height:22.30px;background:#222;"></div>
<div style="left:253.75px;top:451.00px;width:101.25px;height:0.80px;background:#333;"></div>
<div style="left:253.75px;top:473.50px;width:101.25px;height:0.80px;background:#333;"></div>
<div style="left:253.25px;top:451.40px;width:1.00px;height:22.50px;background:#222;"></div>
<div style="left:354.00px;top:451.40px;width:1.00px;height:22.50px;background:#222;"></div>
<div style="left:253.75px;top:417.80px;width:59.55px;height:0.80px;background:#333;"></div>
<div style="left:253.75px;top:434.90px;width:59.55px;height:0.80px;background:#333;"></div>
<div style="left:253.25px;top:418.20px;width:1.00px;height:17.10px;background:#222;"></div>
<div style="left:312.30px;top:418.20px;width:1.00px;height:17.10px;background:#222;"></div>
<div style="left:253.75px;top:434.90px;width:59.55px;height:0.80px;background:#333;"></div>
<div style="left:253.75px;top:451.00px;width:59.55px;height:0.80px;background:#333;"></div>
<div style="left:253.25px;top:435.30px;width:1.00px;height:16.10px;background:#222;"></div>
<div style="left:312.30px;top:435.30px;width:1.00px;height:16.10px;background:#222;"></div>
<div style="left:253.75px;top:473.50px;width:59.55px;height:0.80px;background:#333;"></div>
<div style="left:253.75px;top:490.30px;width:59.55px;height:0.80px;background:#333;"></div>
<div style="left:253.25px;top:473.90px;width:1.00px;height:16.80px;background:#222;"></div>
<div style="left:312.30px;top:473.90px;width:1.00px;height:16.80px;background:#222;"></div>
<div style="left:253.75px;top:490.30px;width:59.55px;height:0.80px;background:#333;"></div>
<div style="left:253.75px;top:506.90px;width:59.55px;height:0.80px;background:#333;"></div>
<div style="left:253.25px;top:490.70px;width:1.00px;height:16.60px;background:#222;"></div>
<div style="left:312.30px;top:490.70px;width:1.00px;height:16.60px;background:#222;"></div>
<div style="left:253.75px;top:506.90px;width:59.55px;height:0.80px;background:#333;"></div>
<div style="left:253.75px;top:523.40px;width:59.55px;height:0.80px;background:#333;"></div>
<div style="left:253.25px;top:507.30px;width:1.00px;height:16.50px;background:#222;"></div>
<div style="left:312.30px;top:507.30px;width:1.00px;height:16.50px;background:#222;"></div>
<div style="left:253.75px;top:523.40px;width:59.55px;height:0.80px;background:#333;"></div>
<div style="left:253.75px;top:539.70px;width:59.55px;height:0.80px;background:#333;"></div>
<div style="left:253.25px;top:523.80px;width:1.00px;height:16.30px;background:#222;"></div>
<div style="left:312.30px;top:523.80px;width:1.00px;height:16.30px;background:#222;"></div>
<div style="left:253.75px;top:539.70px;width:59.55px;height:0.80px;background:#333;"></div>
<div style="left:253.75px;top:555.80px;width:59.55px;height:0.80px;background:#333;"></div>
<div style="left:253.25px;top:540.10px;width:1.00px;height:16.10px;background:#222;"></div>
<div style="left:312.30px;top:540.10px;width:1.00px;height:16.10px;background:#222;"></div>
<div style="left:253.75px;top:555.80px;width:59.55px;height:0.80px;background:#333;"></div>
<div style="left:253.75px;top:572.90px;width:59.55px;height:0.80px;background:#333;"></div>
<div style="left:253.25px;top:556.20px;width:1.00px;height:17.10px;background:#222;"></div>
<div style="left:312.30px;top:556.20px;width:1.00px;height:17.10px;background:#222;"></div>
<div style="left:253.75px;top:572.90px;width:59.55px;height:0.80px;background:#333;"></div>
<div style="left:253.75px;top:589.10px;width:59.55px;height:0.80px;background:#333;"></div>
<div style="left:253.25px;top:573.30px;width:1.00px;height:16.20px;background:#222;"></div>
<div style="left:312.30px;top:573.30px;width:1.00px;height:16.20px;background:#222;"></div>
<div style="left:253.75px;top:589.10px;width:59.55px;height:0.80px;background:#333;"></div>
<div style="left:253.75px;top:604.70px;width:59.55px;height:0.80px;background:#333;"></div>
<div style="left:253.25px;top:589.50px;width:1.00px;height:15.60px;background:#222;"></div>
<div style="left:312.30px;top:589.50px;width:1.00px;height:15.60px;background:#222;"></div>
<div style="left:253.75px;top:604.70px;width:59.55px;height:0.80px;background:#333;"></div>
<div style="left:253.75px;top:620.90px;width:59.55px;height:0.80px;background:#333;"></div>
<div style="left:253.25px;top:605.10px;width:1.00px;height:16.20px;background:#222;"></div>
<div style="left:312.30px;top:605.10px;width:1.00px;height:16.20px;background:#222;"></div>
<div style="left:253.75px;top:620.90px;width:59.55px;height:0.80px;background:#333;"></div>
<div style="left:253.75px;top:637.20px;width:59.55px;height:0.80px;background:#333;"></div>
<div style="left:253.25px;top:621.30px;width:1.00px;height:16.30px;background:#222;"></div>
<div style="left:312.30px;top:621.30px;width:1.00px;height:16.30px;background:#222;"></div>
<div style="left:253.75px;top:637.20px;width:59.55px;height:0.80px;background:#333;"></div>
<div style="left:253.75px;top:653.30px;width:59.55px;height:0.80px;background:#333;"></div>
<div style="left:253.25px;top:637.60px;width:1.00px;height:16.10px;background:#222;"></div>
<div style="left:312.30px;top:637.60px;width:1.00px;height:16.10px;background:#222;"></div>
<div style="left:253.75px;top:653.30px;width:59.55px;height:0.80px;background:#333;"></div>
<div style="left:253.75px;top:671.90px;width:59.55px;height:0.80px;background:#333;"></div>
<div style="left:253.25px;top:653.70px;width:1.00px;height:18.60px;background:#222;"></div>
<div style="left:312.30px;top:653.70px;width:1.00px;height:18.60px;background:#222;"></div>
<div style="left:253.75px;top:671.90px;width:59.55px;height:0.80px;background:#333;"></div>
<div style="left:253.75px;top:695.30px;width:59.55px;height:0.80px;background:#333;"></div>
<div style="left:253.25px;top:672.30px;width:1.00px;height:23.40px;background:#222;"></div>
<div style="left:312.30px;top:672.30px;width:1.00px;height:23.40px;background:#222;"></div>
<div style="left:253.75px;top:695.30px;width:101.25px;height:0.80px;background:#333;"></div>
<div style="left:253.75px;top:711.90px;width:101.25px;height:0.80px;background:#333;"></div>
<div style="left:253.25px;top:695.70px;width:1.00px;height:16.60px;background:#222;"></div>
<div style="left:354.00px;top:695.70px;width:1.00px;height:16.60px;background:#222;"></div>
<div style="left:354.50px;top:695.30px;width:42.50px;height:0.80px;background:#333;"></div>
<div style="left:354.50px;top:711.90px;width:42.50px;height:0.80px;background:#333;"></div>
<div style="left:354.00px;top:695.70px;width:1.00px;height:16.60px;background:#222;"></div>
<div style="left:396.00px;top:695.70px;width:1.00px;height:16.60px;background:#222;"></div>
<div style="left:253.75px;top:711.90px;width:101.25px;height:0.80px;background:#333;"></div>
<div style="left:253.75px;top:729.10px;width:101.25px;height:0.80px;background:#333;"></div>
<div style="left:253.25px;top:712.30px;width:1.00px;height:17.20px;background:#222;"></div>
<div style="left:354.00px;top:712.30px;width:1.00px;height:17.20px;background:#222;"></div>
<div style="left:354.50px;top:711.90px;width:42.50px;height:0.80px;background:#333;"></div>
<div style="left:354.50px;top:729.10px;width:42.50px;height:0.80px;background:#333;"></div>
<div style="left:354.00px;top:712.30px;width:1.00px;height:17.20px;background:#222;"></div>
<div style="left:396.00px;top:712.30px;width:1.00px;height:17.20px;background:#222;"></div>
<div style="left:253.75px;top:729.10px;width:101.25px;height:0.80px;background:#333;"></div>
<div style="left:253.75px;top:745.40px;width:101.25px;height:0.80px;background:#333;"></div>
<div style="left:253.25px;top:729.50px;width:1.00px;height:16.30px;background:#222;"></div>
<div style="left:354.00px;top:729.50px;width:1.00px;height:16.30px;background:#222;"></div>
<div style="left:354.50px;top:729.10px;width:42.50px;height:0.80px;background:#333;"></div>
<div style="left:354.50px;top:745.40px;width:42.50px;height:0.80px;background:#333;"></div>
<div style="left:354.00px;top:729.50px;width:1.00px;height:16.30px;background:#222;"></div>
<div style="left:396.00px;top:729.50px;width:1.00px;height:16.30px;background:#222;"></div>
<div style="left:253.75px;top:745.40px;width:101.25px;height:0.80px;background:#333;"></div>
<div style="left:253.75px;top:762.10px;width:101.25px;height:0.80px;background:#333;"></div>
<div style="left:253.25px;top:745.80px;width:1.00px;height:16.70px;background:#222;"></div>
<div style="left:354.00px;top:745.80px;width:1.00px;height:16.70px;background:#222;"></div>
<div style="left:354.50px;top:745.40px;width:42.50px;height:0.80px;background:#333;"></div>
<div style="left:354.50px;top:762.10px;width:42.50px;height:0.80px;background:#333;"></div>
<div style="left:354.00px;top:745.80px;width:1.00px;height:16.70px;background:#222;"></div>
<div style="left:396.00px;top:745.80px;width:1.00px;height:16.70px;background:#222;"></div>
<div style="left:253.75px;top:762.10px;width:101.25px;height:0.80px;background:#333;"></div>
<div style="left:253.75px;top:778.60px;width:101.25px;height:0.80px;background:#333;"></div>
<div style="left:253.25px;top:762.50px;width:1.00px;height:16.50px;background:#222;"></div>
<div style="left:354.00px;top:762.50px;width:1.00px;height:16.50px;background:#222;"></div>
<div style="left:354.50px;top:762.10px;width:42.50px;height:0.80px;background:#333;"></div>
<div style="left:354.50px;top:778.60px;width:42.50px;height:0.80px;background:#333;"></div>
<div style="left:354.00px;top:762.50px;width:1.00px;height:16.50px;background:#222;"></div>
<div style="left:396.00px;top:762.50px;width:1.00px;height:16.50px;background:#222;"></div>
<div style="left:253.25px;top:779.00px;width:1.00px;height:15.00px;background:#222;"></div>
<div style="left:354.00px;top:779.00px;width:1.00px;height:15.00px;background:#222;"></div>
<div style="left:396.00px;top:779.00px;width:1.00px;height:15.00px;background:#222;"></div>
<div style="left:156.50px;top:256.20px;width:96.25px;height:16.40px;border:1.3px solid #2C7B52;box-sizing:content-box"></div>
<div style="left:252.25px;top:272.10px;width:3.60px;height:3.60px;background:#217346;border:0.6px solid #fff;"></div>
<div style="left:0.00px;top:113.00px;width:1012.00px;height:11.00px;background:#E6E6E6;"></div>
<div style="left:0.00px;top:124.00px;width:9.60px;height:670.00px;background:#E6E6E6;"></div>
<div style="left:0.00px;top:123.50px;width:1012.00px;height:1.00px;background:#ABABAB;"></div>
<div style="left:9.10px;top:124.00px;width:0.80px;height:670.00px;background:#CDCDCD;"></div>
<div style="left:157.50px;top:113.00px;width:96.25px;height:10.50px;background:#D2D2D2;"></div>
<div style="left:157.50px;top:122.90px;width:96.25px;height:1.40px;background:#217346;"></div>
<div style="left:0.00px;top:257.20px;width:9.20px;height:16.40px;background:#D2D2D2;"></div>
<div style="left:8.90px;top:257.20px;width:1.20px;height:16.40px;background:#217346;"></div>
<svg style="left:2px;top:115px" width="7" height="7"><path d="M6.5 0.5V6.5H0.5Z" fill="#B7B7B7"/></svg>
<span class="u" style="top:115px;line-height:9px;font-size:6.4px;left:-247.50px;width:600px;text-align:center;color:#444;">A</span>
<div style="left:94.50px;top:115.00px;width:1.00px;height:8.50px;background:#C4C4C4;"></div>
<span class="u" style="top:115px;line-height:9px;font-size:6.4px;left:-173.75px;width:600px;text-align:center;color:#444;">B</span>
<div style="left:157.00px;top:115.00px;width:1.00px;height:8.50px;background:#C4C4C4;"></div>
<span class="u" style="top:115px;line-height:9px;font-size:6.4px;left:-94.38px;width:600px;text-align:center;color:#217346;">C</span>
<div style="left:253.25px;top:115.00px;width:1.00px;height:8.50px;background:#C4C4C4;"></div>
<span class="u" style="top:115px;line-height:9px;font-size:6.4px;left:-16.73px;width:600px;text-align:center;color:#444;">D</span>
<div style="left:312.30px;top:115.00px;width:1.00px;height:8.50px;background:#C4C4C4;"></div>
<span class="u" style="top:115px;line-height:9px;font-size:6.4px;left:33.65px;width:600px;text-align:center;color:#444;">E</span>
<div style="left:354.00px;top:115.00px;width:1.00px;height:8.50px;background:#C4C4C4;"></div>
<span class="u" style="top:115px;line-height:9px;font-size:6.4px;left:75.50px;width:600px;text-align:center;color:#444;">F</span>
<div style="left:396.00px;top:115.00px;width:1.00px;height:8.50px;background:#C4C4C4;"></div>
<span class="u" style="top:115px;line-height:9px;font-size:6.4px;left:117.25px;width:600px;text-align:center;color:#444;">G</span>
<div style="left:437.50px;top:115.00px;width:1.00px;height:8.50px;background:#C4C4C4;"></div>
<span class="u" style="top:115px;line-height:9px;font-size:6.4px;left:158.75px;width:600px;text-align:center;color:#444;">H</span>
<div style="left:479.00px;top:115.00px;width:1.00px;height:8.50px;background:#C4C4C4;"></div>
<span class="u" style="top:115px;line-height:9px;font-size:6.4px;left:200.50px;width:600px;text-align:center;color:#444;">I</span>
<div style="left:521.00px;top:115.00px;width:1.00px;height:8.50px;background:#C4C4C4;"></div>
<span class="u" style="top:115px;line-height:9px;font-size:6.4px;left:242.25px;width:600px;text-align:center;color:#444;">J</span>
<div style="left:562.50px;top:115.00px;width:1.00px;height:8.50px;background:#C4C4C4;"></div>
<span class="u" style="top:115px;line-height:9px;font-size:6.4px;left:286.88px;width:600px;text-align:center;color:#444;">K</span>
<div style="left:610.25px;top:115.00px;width:1.00px;height:8.50px;background:#C4C4C4;"></div>
<span class="u" style="top:115px;line-height:9px;font-size:6.4px;left:331.38px;width:600px;text-align:center;color:#444;">L</span>
<div style="left:651.50px;top:115.00px;width:1.00px;height:8.50px;background:#C4C4C4;"></div>
<span class="u" style="top:115px;line-height:9px;font-size:6.4px;left:374.75px;width:600px;text-align:center;color:#444;">M</span>
<div style="left:697.00px;top:115.00px;width:1.00px;height:8.50px;background:#C4C4C4;"></div>
<span class="u" style="top:115px;line-height:9px;font-size:6.4px;left:419.50px;width:600px;text-align:center;color:#444;">N</span>
<div style="left:741.00px;top:115.00px;width:1.00px;height:8.50px;background:#C4C4C4;"></div>
<span class="u" style="top:115px;line-height:9px;font-size:6.4px;left:468.50px;width:600px;text-align:center;color:#444;">O</span>
<div style="left:795.00px;top:115.00px;width:1.00px;height:8.50px;background:#C4C4C4;"></div>
<span class="u" style="top:115px;line-height:9px;font-size:6.4px;left:527.62px;width:600px;text-align:center;color:#444;">P</span>
<div style="left:859.25px;top:115.00px;width:1.00px;height:8.50px;background:#C4C4C4;"></div>
<span class="u" style="top:115px;line-height:9px;font-size:6.4px;left:576.62px;width:600px;text-align:center;color:#444;">Q</span>
<div style="left:893.00px;top:115.00px;width:1.00px;height:8.50px;background:#C4C4C4;"></div>
<span class="u" style="top:115px;line-height:9px;font-size:6.4px;left:610.50px;width:600px;text-align:center;color:#444;">R</span>
<div style="left:927.00px;top:115.00px;width:1.00px;height:8.50px;background:#C4C4C4;"></div>
<span class="u" style="top:115px;line-height:9px;font-size:6.4px;left:644.75px;width:600px;text-align:center;color:#444;">S</span>
<div style="left:961.50px;top:115.00px;width:1.00px;height:8.50px;background:#C4C4C4;"></div>
<span class="u" style="top:115px;line-height:9px;font-size:6.4px;left:679.25px;width:600px;text-align:center;color:#444;">T</span>
<div style="left:996.00px;top:115.00px;width:1.00px;height:8.50px;background:#C4C4C4;"></div>
<span class="u" style="top:131px;line-height:9px;font-size:6.4px;left:-296.20px;width:600px;text-align:center;color:#444;">1</span>
<div style="left:0.00px;top:140.20px;width:9.60px;height:1.00px;background:#BEBEBE;"></div>
<span class="u" style="top:148px;line-height:9px;font-size:6.4px;left:-296.20px;width:600px;text-align:center;color:#444;">2</span>
<div style="left:0.00px;top:157.20px;width:9.60px;height:1.00px;background:#BEBEBE;"></div>
<span class="u" style="top:165px;line-height:9px;font-size:6.4px;left:-296.20px;width:600px;text-align:center;color:#444;">3</span>
<div style="left:0.00px;top:173.75px;width:9.60px;height:1.00px;background:#BEBEBE;"></div>
<span class="u" style="top:181px;line-height:9px;font-size:6.4px;left:-296.20px;width:600px;text-align:center;color:#444;">4</span>
<div style="left:0.00px;top:190.20px;width:9.60px;height:1.00px;background:#BEBEBE;"></div>
<span class="u" style="top:198px;line-height:9px;font-size:6.4px;left:-296.20px;width:600px;text-align:center;color:#444;">5</span>
<div style="left:0.00px;top:206.70px;width:9.60px;height:1.00px;background:#BEBEBE;"></div>
<span class="u" style="top:214px;line-height:9px;font-size:6.4px;left:-296.20px;width:600px;text-align:center;color:#444;">6</span>
<div style="left:0.00px;top:223.50px;width:9.60px;height:1.00px;background:#BEBEBE;"></div>
<span class="u" style="top:231px;line-height:9px;font-size:6.4px;left:-296.20px;width:600px;text-align:center;color:#444;">7</span>
<div style="left:0.00px;top:239.95px;width:9.60px;height:1.00px;background:#BEBEBE;"></div>
<span class="u" style="top:248px;line-height:9px;font-size:6.4px;left:-296.20px;width:600px;text-align:center;color:#444;">8</span>
<div style="left:0.00px;top:256.70px;width:9.60px;height:1.00px;background:#BEBEBE;"></div>
<span class="u" style="top:264px;line-height:9px;font-size:6.4px;left:-296.20px;width:600px;text-align:center;color:#217346;">9</span>
<div style="left:0.00px;top:273.10px;width:9.60px;height:1.00px;background:#BEBEBE;"></div>
<span class="u" style="top:281px;line-height:9px;font-size:6.4px;left:-296.20px;width:600px;text-align:center;color:#444;">10</span>
<div style="left:0.00px;top:289.90px;width:9.60px;height:1.00px;background:#BEBEBE;"></div>
<span class="u" style="top:298px;line-height:9px;font-size:6.4px;left:-296.20px;width:600px;text-align:center;color:#444;">11</span>
<div style="left:0.00px;top:306.70px;width:9.60px;height:1.00px;background:#BEBEBE;"></div>
<span class="u" style="top:314px;line-height:9px;font-size:6.4px;left:-296.20px;width:600px;text-align:center;color:#444;">12</span>
<div style="left:0.00px;top:322.70px;width:9.60px;height:1.00px;background:#BEBEBE;"></div>
<span class="u" style="top:331px;line-height:9px;font-size:6.4px;left:-296.20px;width:600px;text-align:center;color:#444;">13</span>
<div style="left:0.00px;top:339.85px;width:9.60px;height:1.00px;background:#BEBEBE;"></div>
<span class="u" style="top:347px;line-height:9px;font-size:6.4px;left:-296.20px;width:600px;text-align:center;color:#444;">14</span>
<div style="left:0.00px;top:356.30px;width:9.60px;height:1.00px;background:#BEBEBE;"></div>
<span class="u" style="top:370px;line-height:9px;font-size:6.4px;left:-296.20px;width:600px;text-align:center;color:#444;">15</span>
<div style="left:0.00px;top:378.70px;width:9.60px;height:1.00px;background:#BEBEBE;"></div>
<span class="u" style="top:386px;line-height:9px;font-size:6.4px;left:-296.20px;width:600px;text-align:center;color:#444;">16</span>
<div style="left:0.00px;top:395.40px;width:9.60px;height:1.00px;background:#BEBEBE;"></div>
<span class="u" style="top:409px;line-height:9px;font-size:6.4px;left:-296.20px;width:600px;text-align:center;color:#444;">17</span>
<div style="left:0.00px;top:417.70px;width:9.60px;height:1.00px;background:#BEBEBE;"></div>
<span class="u" style="top:426px;line-height:9px;font-size:6.4px;left:-296.20px;width:600px;text-align:center;color:#444;">18</span>
<div style="left:0.00px;top:434.80px;width:9.60px;height:1.00px;background:#BEBEBE;"></div>
<span class="u" style="top:442px;line-height:9px;font-size:6.4px;left:-296.20px;width:600px;text-align:center;color:#444;">19</span>
<div style="left:0.00px;top:450.90px;width:9.60px;height:1.00px;background:#BEBEBE;"></div>
<span class="u" style="top:464px;line-height:9px;font-size:6.4px;left:-296.20px;width:600px;text-align:center;color:#444;">20</span>
<div style="left:0.00px;top:473.40px;width:9.60px;height:1.00px;background:#BEBEBE;"></div>
<span class="u" style="top:481px;line-height:9px;font-size:6.4px;left:-296.20px;width:600px;text-align:center;color:#444;">21</span>
<div style="left:0.00px;top:490.20px;width:9.60px;height:1.00px;background:#BEBEBE;"></div>
<span class="u" style="top:498px;line-height:9px;font-size:6.4px;left:-296.20px;width:600px;text-align:center;color:#444;">22</span>
<div style="left:0.00px;top:506.80px;width:9.60px;height:1.00px;background:#BEBEBE;"></div>
<span class="u" style="top:514px;line-height:9px;font-size:6.4px;left:-296.20px;width:600px;text-align:center;color:#444;">23</span>
<div style="left:0.00px;top:523.30px;width:9.60px;height:1.00px;background:#BEBEBE;"></div>
<span class="u" style="top:531px;line-height:9px;font-size:6.4px;left:-296.20px;width:600px;text-align:center;color:#444;">24</span>
<div style="left:0.00px;top:539.60px;width:9.60px;height:1.00px;background:#BEBEBE;"></div>
<span class="u" style="top:547px;line-height:9px;font-size:6.4px;left:-296.20px;width:600px;text-align:center;color:#444;">25</span>
<div style="left:0.00px;top:555.70px;width:9.60px;height:1.00px;background:#BEBEBE;"></div>
<span class="u" style="top:564px;line-height:9px;font-size:6.4px;left:-296.20px;width:600px;text-align:center;color:#444;">26</span>
<div style="left:0.00px;top:572.80px;width:9.60px;height:1.00px;background:#BEBEBE;"></div>
<span class="u" style="top:580px;line-height:9px;font-size:6.4px;left:-296.20px;width:600px;text-align:center;color:#444;">27</span>
<div style="left:0.00px;top:589.00px;width:9.60px;height:1.00px;background:#BEBEBE;"></div>
<span class="u" style="top:595px;line-height:9px;font-size:6.4px;left:-296.20px;width:600px;text-align:center;color:#444;">28</span>
<div style="left:0.00px;top:604.60px;width:9.60px;height:1.00px;background:#BEBEBE;"></div>
<span class="u" style="top:612px;line-height:9px;font-size:6.4px;left:-296.20px;width:600px;text-align:center;color:#444;">29</span>
<div style="left:0.00px;top:620.80px;width:9.60px;height:1.00px;background:#BEBEBE;"></div>
<span class="u" style="top:628px;line-height:9px;font-size:6.4px;left:-296.20px;width:600px;text-align:center;color:#444;">30</span>
<div style="left:0.00px;top:637.10px;width:9.60px;height:1.00px;background:#BEBEBE;"></div>
<span class="u" style="top:644px;line-height:9px;font-size:6.4px;left:-296.20px;width:600px;text-align:center;color:#444;">31</span>
<div style="left:0.00px;top:653.20px;width:9.60px;height:1.00px;background:#BEBEBE;"></div>
<span class="u" style="top:663px;line-height:9px;font-size:6.4px;left:-296.20px;width:600px;text-align:center;color:#444;">32</span>
<div style="left:0.00px;top:671.80px;width:9.60px;height:1.00px;background:#BEBEBE;"></div>
<span class="u" style="top:686px;line-height:9px;font-size:6.4px;left:-296.20px;width:600px;text-align:center;color:#444;">33</span>
<div style="left:0.00px;top:695.20px;width:9.60px;height:1.00px;background:#BEBEBE;"></div>
<span class="u" style="top:703px;line-height:9px;font-size:6.4px;left:-296.20px;width:600px;text-align:center;color:#444;">34</span>
<div style="left:0.00px;top:711.80px;width:9.60px;height:1.00px;background:#BEBEBE;"></div>
<span class="u" style="top:720px;line-height:9px;font-size:6.4px;left:-296.20px;width:600px;text-align:center;color:#444;">35</span>
<div style="left:0.00px;top:729.00px;width:9.60px;height:1.00px;background:#BEBEBE;"></div>
<span class="u" style="top:736px;line-height:9px;font-size:6.4px;left:-296.20px;width:600px;text-align:center;color:#444;">36</span>
<div style="left:0.00px;top:745.30px;width:9.60px;height:1.00px;background:#BEBEBE;"></div>
<span class="u" style="top:753px;line-height:9px;font-size:6.4px;left:-296.20px;width:600px;text-align:center;color:#444;">37</span>
<div style="left:0.00px;top:762.00px;width:9.60px;height:1.00px;background:#BEBEBE;"></div>
<span class="u" style="top:769px;line-height:9px;font-size:6.4px;left:-296.20px;width:600px;text-align:center;color:#444;">38</span>
<div style="left:0.00px;top:778.50px;width:9.60px;height:1.00px;background:#BEBEBE;"></div>
<span class="u" style="top:784px;line-height:9px;font-size:6.4px;left:-296.20px;width:600px;text-align:center;color:#444;">39</span>
<span class="sb" style="top:128px;line-height:14px;font-size:10.4px;left:134.88px;width:600px;text-align:center;color:#44546A;">Sports Equipments Sales in 2017</span>
<span class="sb" style="top:146px;line-height:13px;font-size:9.0px;left:-247.50px;width:600px;text-align:center;color:#44546A;">Equipment</span>
<span class="sb" style="top:146px;line-height:13px;font-size:9.0px;left:-173.75px;width:600px;text-align:center;color:#44546A;">Equipment ID</span>
<span class="sb" style="top:146px;line-height:13px;font-size:9.0px;left:-94.38px;width:600px;text-align:center;color:#44546A;">January</span>
<span class="sb" style="top:146px;line-height:13px;font-size:9.0px;left:-16.73px;width:600px;text-align:center;color:#44546A;">February</span>
<span class="sb" style="top:146px;line-height:13px;font-size:9.0px;left:33.65px;width:600px;text-align:center;color:#44546A;">March</span>
<span class="sb" style="top:146px;line-height:13px;font-size:9.0px;left:75.50px;width:600px;text-align:center;color:#44546A;">April</span>
<span class="sb" style="top:146px;line-height:13px;font-size:9.0px;left:117.25px;width:600px;text-align:center;color:#44546A;">May</span>
<span class="sb" style="top:146px;line-height:13px;font-size:9.0px;left:158.75px;width:600px;text-align:center;color:#44546A;">June</span>
<span class="sb" style="top:146px;line-height:13px;font-size:9.0px;left:200.50px;width:600px;text-align:center;color:#44546A;">July</span>
<span class="sb" style="top:146px;line-height:13px;font-size:9.0px;left:242.25px;width:600px;text-align:center;color:#44546A;">August</span>
<span class="sb" style="top:146px;line-height:13px;font-size:9.0px;left:286.88px;width:600px;text-align:center;color:#44546A;">September</span>
<span class="sb" style="top:146px;line-height:13px;font-size:9.0px;left:331.38px;width:600px;text-align:center;color:#44546A;">October</span>
<span class="sb" style="top:146px;line-height:13px;font-size:9.0px;left:374.75px;width:600px;text-align:center;color:#44546A;">November</span>
<span class="sb" style="top:146px;line-height:13px;font-size:9.0px;left:419.50px;width:600px;text-align:center;color:#44546A;">December</span>
<span class="sb" style="top:146px;line-height:13px;font-size:9.0px;left:468.50px;width:600px;text-align:center;color:#44546A;">Total</span>
<span class="sb" style="top:146px;line-height:13px;font-size:9.0px;left:527.62px;width:600px;text-align:center;color:#44546A;">Trend</span>
<span class="sb" style="top:163px;line-height:12px;font-size:8.37px;left:11.60px;">Balls</span>
<span class="sb" style="top:163px;line-height:12px;font-size:8.37px;right:868.10px;">1119</span>
<span class="s" style="top:163px;line-height:12px;font-size:8.25px;left:161.70px;">$</span>
<span class="s" style="top:163px;line-height:12px;font-size:8.25px;right:774.85px;">1,741</span>
<span class="s" style="top:163px;line-height:12px;font-size:8.25px;left:257.95px;">$</span>
<span class="s" style="top:163px;line-height:12px;font-size:8.25px;right:715.80px;">1,926</span>
<span class="s" style="top:163px;line-height:12px;font-size:8.25px;left:317.00px;">$</span>
<span class="s" style="top:163px;line-height:12px;font-size:8.25px;right:674.10px;">1,812</span>
<span class="s" style="top:163px;line-height:12px;font-size:8.25px;left:358.70px;">$</span>
<span class="s" style="top:163px;line-height:12px;font-size:8.25px;right:632.10px;">1,849</span>
<span class="s" style="top:163px;line-height:12px;font-size:8.25px;left:400.70px;">$</span>
<span class="s" style="top:163px;line-height:12px;font-size:8.25px;right:590.60px;">2,208</span>
<span class="s" style="top:163px;line-height:12px;font-size:8.25px;left:442.20px;">$</span>
<span class="s" style="top:163px;line-height:12px;font-size:8.25px;right:549.10px;">1,799</span>
<span class="s" style="top:163px;line-height:12px;font-size:8.25px;left:483.70px;">$</span>
<span class="s" style="top:163px;line-height:12px;font-size:8.25px;right:507.10px;">1,819</span>
<span class="s" style="top:163px;line-height:12px;font-size:8.25px;left:525.70px;">$</span>
<span class="s" style="top:163px;line-height:12px;font-size:8.25px;right:465.60px;">2,112</span>
<span class="s" style="top:163px;line-height:12px;font-size:8.25px;left:567.20px;">$</span>
<span class="s" style="top:163px;line-height:12px;font-size:8.25px;right:417.85px;">1,829</span>
<span class="s" style="top:163px;line-height:12px;font-size:8.25px;left:614.95px;">$</span>
<span class="s" style="top:163px;line-height:12px;font-size:8.25px;right:376.60px;">2,514</span>
<span class="s" style="top:163px;line-height:12px;font-size:8.25px;left:656.20px;">$</span>
<span class="s" style="top:163px;line-height:12px;font-size:8.25px;right:331.10px;">2,023</span>
<span class="s" style="top:163px;line-height:12px;font-size:8.25px;left:701.70px;">$</span>
<span class="s" style="top:163px;line-height:12px;font-size:8.25px;right:287.10px;">2,484</span>
<span class="sb" style="top:163px;line-height:12px;font-size:8.37px;left:745.70px;">$</span>
<span class="sb" style="top:163px;line-height:12px;font-size:8.37px;right:233.10px;">24,116</span>
<svg style="left:0;top:0" width="1024" height="300"><polyline points="798.7,171.1 804.0,168.6 809.2,170.1 814.5,169.6 819.7,164.8 825.0,170.3 830.3,170.0 835.5,166.1 840.8,169.9 846.0,160.7 851.3,167.3 856.5,161.1" fill="none" stroke="#4A6FA8" stroke-width="0.75"/></svg>
<span class="sb" style="top:180px;line-height:12px;font-size:8.37px;left:11.60px;">Goals</span>
<span class="sb" style="top:180px;line-height:12px;font-size:8.37px;right:868.10px;">1214</span>
<span class="s" style="top:180px;line-height:12px;font-size:8.25px;left:161.70px;">$</span>
<span class="s" style="top:180px;line-height:12px;font-size:8.25px;right:774.85px;">1,286</span>
<span class="s" style="top:180px;line-height:12px;font-size:8.25px;left:257.95px;">$</span>
<span class="s" style="top:180px;line-height:12px;font-size:8.25px;right:715.80px;">1,583</span>
<span class="s" style="top:180px;line-height:12px;font-size:8.25px;left:317.00px;">$</span>
<span class="s" style="top:180px;line-height:12px;font-size:8.25px;right:674.10px;">1,711</span>
<span class="s" style="top:180px;line-height:12px;font-size:8.25px;left:358.70px;">$</span>
<span class="s" style="top:180px;line-height:12px;font-size:8.25px;right:632.10px;">1,574</span>
<span class="s" style="top:180px;line-height:12px;font-size:8.25px;left:400.70px;">$</span>
<span class="s" style="top:180px;line-height:12px;font-size:8.25px;right:590.60px;">1,687</span>
<span class="s" style="top:180px;line-height:12px;font-size:8.25px;left:442.20px;">$</span>
<span class="s" style="top:180px;line-height:12px;font-size:8.25px;right:549.10px;">1,523</span>
<span class="s" style="top:180px;line-height:12px;font-size:8.25px;left:483.70px;">$</span>
<span class="s" style="top:180px;line-height:12px;font-size:8.25px;right:507.10px;">1,573</span>
<span class="s" style="top:180px;line-height:12px;font-size:8.25px;left:525.70px;">$</span>
<span class="s" style="top:180px;line-height:12px;font-size:8.25px;right:465.60px;">1,424</span>
<span class="s" style="top:180px;line-height:12px;font-size:8.25px;left:567.20px;">$</span>
<span class="s" style="top:180px;line-height:12px;font-size:8.25px;right:417.85px;">1,669</span>
<span class="s" style="top:180px;line-height:12px;font-size:8.25px;left:614.95px;">$</span>
<span class="s" style="top:180px;line-height:12px;font-size:8.25px;right:376.60px;">1,536</span>
<span class="s" style="top:180px;line-height:12px;font-size:8.25px;left:656.20px;">$</span>
<span class="s" style="top:180px;line-height:12px;font-size:8.25px;right:331.10px;">1,632</span>
<span class="s" style="top:180px;line-height:12px;font-size:8.25px;left:701.70px;">$</span>
<span class="s" style="top:180px;line-height:12px;font-size:8.25px;right:287.10px;">2,159</span>
<span class="sb" style="top:180px;line-height:12px;font-size:8.37px;left:745.70px;">$</span>
<span class="sb" style="top:180px;line-height:12px;font-size:8.37px;right:233.10px;">19,357</span>
<svg style="left:0;top:0" width="1024" height="300"><polyline points="798.7,187.5 804.0,184.0 809.2,182.5 814.5,184.1 819.7,182.8 825.0,184.7 830.3,184.1 835.5,185.9 840.8,183.0 846.0,184.6 851.3,183.4 856.5,177.2" fill="none" stroke="#4A6FA8" stroke-width="0.75"/></svg>
<span class="sb" style="top:196px;line-height:12px;font-size:8.37px;left:11.60px;">Nets</span>
<span class="sb" style="top:196px;line-height:12px;font-size:8.37px;right:868.10px;">1182</span>
<span class="s" style="top:196px;line-height:12px;font-size:8.25px;left:161.70px;">$</span>
<span class="s" style="top:196px;line-height:12px;font-size:8.25px;right:774.85px;">1,263</span>
<span class="s" style="top:196px;line-height:12px;font-size:8.25px;left:257.95px;">$</span>
<span class="s" style="top:196px;line-height:12px;font-size:8.25px;right:715.80px;">1,368</span>
<span class="s" style="top:196px;line-height:12px;font-size:8.25px;left:317.00px;">$</span>
<span class="s" style="top:196px;line-height:12px;font-size:8.25px;right:674.10px;">1,479</span>
<span class="s" style="top:196px;line-height:12px;font-size:8.25px;left:358.70px;">$</span>
<span class="s" style="top:196px;line-height:12px;font-size:8.25px;right:632.10px;">1,357</span>
<span class="s" style="top:196px;line-height:12px;font-size:8.25px;left:400.70px;">$</span>
<span class="s" style="top:196px;line-height:12px;font-size:8.25px;right:590.60px;">1,671</span>
<span class="s" style="top:196px;line-height:12px;font-size:8.25px;left:442.20px;">$</span>
<span class="s" style="top:196px;line-height:12px;font-size:8.25px;right:549.10px;">1,276</span>
<span class="s" style="top:196px;line-height:12px;font-size:8.25px;left:483.70px;">$</span>
<span class="s" style="top:196px;line-height:12px;font-size:8.25px;right:507.10px;">1,493</span>
<span class="s" style="top:196px;line-height:12px;font-size:8.25px;left:525.70px;">$</span>
<span class="s" style="top:196px;line-height:12px;font-size:8.25px;right:465.60px;">1,678</span>
<span class="s" style="top:196px;line-height:12px;font-size:8.25px;left:567.20px;">$</span>
<span class="s" style="top:196px;line-height:12px;font-size:8.25px;right:417.85px;">1,157</span>
<span class="s" style="top:196px;line-height:12px;font-size:8.25px;left:614.95px;">$</span>
<span class="s" style="top:196px;line-height:12px;font-size:8.25px;right:376.60px;">1,507</span>
<span class="s" style="top:196px;line-height:12px;font-size:8.25px;left:656.20px;">$</span>
<span class="s" style="top:196px;line-height:12px;font-size:8.25px;right:331.10px;">1,529</span>
<span class="s" style="top:196px;line-height:12px;font-size:8.25px;left:701.70px;">$</span>
<span class="s" style="top:196px;line-height:12px;font-size:8.25px;right:287.10px;">1,615</span>
<span class="sb" style="top:196px;line-height:12px;font-size:8.37px;left:745.70px;">$</span>
<span class="sb" style="top:196px;line-height:12px;font-size:8.37px;right:233.10px;">17,393</span>
<svg style="left:0;top:0" width="1024" height="300"><polyline points="798.7,201.9 804.0,199.8 809.2,197.6 814.5,200.0 819.7,193.8 825.0,201.6 830.3,197.4 835.5,193.7 840.8,204.0 846.0,197.1 851.3,196.6 856.5,194.9" fill="none" stroke="#4A6FA8" stroke-width="0.75"/></svg>
<span class="sb" style="top:213px;line-height:12px;font-size:8.37px;left:11.60px;">Racquets</span>
<span class="sb" style="top:213px;line-height:12px;font-size:8.37px;right:868.10px;">1205</span>
<span class="s" style="top:213px;line-height:12px;font-size:8.25px;left:161.70px;">$</span>
<span class="s" style="top:213px;line-height:12px;font-size:8.25px;right:774.85px;">1,046</span>
<span class="s" style="top:213px;line-height:12px;font-size:8.25px;left:257.95px;">$</span>
<span class="s" style="top:213px;line-height:12px;font-size:8.25px;right:715.80px;">1,693</span>
<span class="s" style="top:213px;line-height:12px;font-size:8.25px;left:317.00px;">$</span>
<span class="s" style="top:213px;line-height:12px;font-size:8.25px;right:674.10px;">1,938</span>
<span class="s" style="top:213px;line-height:12px;font-size:8.25px;left:358.70px;">$</span>
<span class="s" style="top:213px;line-height:12px;font-size:8.25px;right:632.10px;">1,670</span>
<span class="s" style="top:213px;line-height:12px;font-size:8.25px;left:400.70px;">$</span>
<span class="s" style="top:213px;line-height:12px;font-size:8.25px;right:590.60px;">1,895</span>
<span class="s" style="top:213px;line-height:12px;font-size:8.25px;left:442.20px;">$</span>
<span class="s" style="top:213px;line-height:12px;font-size:8.25px;right:549.10px;">1,776</span>
<span class="s" style="top:213px;line-height:12px;font-size:8.25px;left:483.70px;">$</span>
<span class="s" style="top:213px;line-height:12px;font-size:8.25px;right:507.10px;">1,608</span>
<span class="s" style="top:213px;line-height:12px;font-size:8.25px;left:525.70px;">$</span>
<span class="s" style="top:213px;line-height:12px;font-size:8.25px;right:465.60px;">1,711</span>
<span class="s" style="top:213px;line-height:12px;font-size:8.25px;left:567.20px;">$</span>
<span class="s" style="top:213px;line-height:12px;font-size:8.25px;right:417.85px;">1,856</span>
<span class="s" style="top:213px;line-height:12px;font-size:8.25px;left:614.95px;">$</span>
<span class="s" style="top:213px;line-height:12px;font-size:8.25px;right:376.60px;">1,671</span>
<span class="s" style="top:213px;line-height:12px;font-size:8.25px;left:656.20px;">$</span>
<span class="s" style="top:213px;line-height:12px;font-size:8.25px;right:331.10px;">1,907</span>
<span class="s" style="top:213px;line-height:12px;font-size:8.25px;left:701.70px;">$</span>
<span class="s" style="top:213px;line-height:12px;font-size:8.25px;right:287.10px;">1,994</span>
<span class="sb" style="top:213px;line-height:12px;font-size:8.37px;left:745.70px;">$</span>
<span class="sb" style="top:213px;line-height:12px;font-size:8.37px;right:233.10px;">20,765</span>
<svg style="left:0;top:0" width="1024" height="300"><polyline points="798.7,220.8 804.0,213.6 809.2,210.8 814.5,213.8 819.7,211.3 825.0,212.6 830.3,214.5 835.5,213.4 840.8,211.7 846.0,213.8 851.3,211.2 856.5,210.2" fill="none" stroke="#4A6FA8" stroke-width="0.75"/></svg>
<span class="sb" style="top:229px;line-height:12px;font-size:8.37px;left:11.60px;">Rods and tackle</span>
<span class="sb" style="top:229px;line-height:12px;font-size:8.37px;right:868.10px;">1206</span>
<span class="s" style="top:229px;line-height:12px;font-size:8.25px;left:161.70px;">$</span>
<span class="s" style="top:229px;line-height:12px;font-size:8.25px;right:774.85px;">886</span>
<span class="s" style="top:229px;line-height:12px;font-size:8.25px;left:257.95px;">$</span>
<span class="s" style="top:229px;line-height:12px;font-size:8.25px;right:715.80px;">1,214</span>
<span class="s" style="top:229px;line-height:12px;font-size:8.25px;left:317.00px;">$</span>
<span class="s" style="top:229px;line-height:12px;font-size:8.25px;right:674.10px;">1,394</span>
<span class="s" style="top:229px;line-height:12px;font-size:8.25px;left:358.70px;">$</span>
<span class="s" style="top:229px;line-height:12px;font-size:8.25px;right:632.10px;">1,174</span>
<span class="s" style="top:229px;line-height:12px;font-size:8.25px;left:400.70px;">$</span>
<span class="s" style="top:229px;line-height:12px;font-size:8.25px;right:590.60px;">1,412</span>
<span class="s" style="top:229px;line-height:12px;font-size:8.25px;left:442.20px;">$</span>
<span class="s" style="top:229px;line-height:12px;font-size:8.25px;right:549.10px;">1,291</span>
<span class="s" style="top:229px;line-height:12px;font-size:8.25px;left:483.70px;">$</span>
<span class="s" style="top:229px;line-height:12px;font-size:8.25px;right:507.10px;">1,325</span>
<span class="s" style="top:229px;line-height:12px;font-size:8.25px;left:525.70px;">$</span>
<span class="s" style="top:229px;line-height:12px;font-size:8.25px;right:465.60px;">1,373</span>
<span class="s" style="top:229px;line-height:12px;font-size:8.25px;left:567.20px;">$</span>
<span class="s" style="top:229px;line-height:12px;font-size:8.25px;right:417.85px;">1,255</span>
<span class="s" style="top:229px;line-height:12px;font-size:8.25px;left:614.95px;">$</span>
<span class="s" style="top:229px;line-height:12px;font-size:8.25px;right:376.60px;">1,448</span>
<span class="s" style="top:229px;line-height:12px;font-size:8.25px;left:656.20px;">$</span>
<span class="s" style="top:229px;line-height:12px;font-size:8.25px;right:331.10px;">1,423</span>
<span class="s" style="top:229px;line-height:12px;font-size:8.25px;left:701.70px;">$</span>
<span class="s" style="top:229px;line-height:12px;font-size:8.25px;right:287.10px;">1,534</span>
<span class="sb" style="top:229px;line-height:12px;font-size:8.37px;left:745.70px;">$</span>
<span class="sb" style="top:229px;line-height:12px;font-size:8.37px;right:233.10px;">15,729</span>
<svg style="left:0;top:0" width="1024" height="300"><polyline points="798.7,237.2 804.0,232.1 809.2,229.2 814.5,232.7 819.7,228.9 825.0,230.8 830.3,230.3 835.5,229.5 840.8,231.4 846.0,228.4 851.3,228.8 856.5,227.0" fill="none" stroke="#4A6FA8" stroke-width="0.75"/></svg>
<span class="sb" style="top:246px;line-height:12px;font-size:8.37px;left:11.60px;">Sticks, bats and clubs</span>
<span class="sb" style="top:246px;line-height:12px;font-size:8.37px;right:868.10px;">1195</span>
<span class="s" style="top:246px;line-height:12px;font-size:8.25px;left:161.70px;">$</span>
<span class="s" style="top:246px;line-height:12px;font-size:8.25px;right:774.85px;">1,772</span>
<span class="s" style="top:246px;line-height:12px;font-size:8.25px;left:257.95px;">$</span>
<span class="s" style="top:246px;line-height:12px;font-size:8.25px;right:715.80px;">1,761</span>
<span class="s" style="top:246px;line-height:12px;font-size:8.25px;left:317.00px;">$</span>
<span class="s" style="top:246px;line-height:12px;font-size:8.25px;right:674.10px;">1,773</span>
<span class="s" style="top:246px;line-height:12px;font-size:8.25px;left:358.70px;">$</span>
<span class="s" style="top:246px;line-height:12px;font-size:8.25px;right:632.10px;">1,927</span>
<span class="s" style="top:246px;line-height:12px;font-size:8.25px;left:400.70px;">$</span>
<span class="s" style="top:246px;line-height:12px;font-size:8.25px;right:590.60px;">1,706</span>
<span class="s" style="top:246px;line-height:12px;font-size:8.25px;left:442.20px;">$</span>
<span class="s" style="top:246px;line-height:12px;font-size:8.25px;right:549.10px;">2,290</span>
<span class="s" style="top:246px;line-height:12px;font-size:8.25px;left:483.70px;">$</span>
<span class="s" style="top:246px;line-height:12px;font-size:8.25px;right:507.10px;">2,160</span>
<span class="s" style="top:246px;line-height:12px;font-size:8.25px;left:525.70px;">$</span>
<span class="s" style="top:246px;line-height:12px;font-size:8.25px;right:465.60px;">2,556</span>
<span class="s" style="top:246px;line-height:12px;font-size:8.25px;left:567.20px;">$</span>
<span class="s" style="top:246px;line-height:12px;font-size:8.25px;right:417.85px;">2,496</span>
<span class="s" style="top:246px;line-height:12px;font-size:8.25px;left:614.95px;">$</span>
<span class="s" style="top:246px;line-height:12px;font-size:8.25px;right:376.60px;">2,161</span>
<span class="s" style="top:246px;line-height:12px;font-size:8.25px;left:656.20px;">$</span>
<span class="s" style="top:246px;line-height:12px;font-size:8.25px;right:331.10px;">2,403</span>
<span class="s" style="top:246px;line-height:12px;font-size:8.25px;left:701.70px;">$</span>
<span class="s" style="top:246px;line-height:12px;font-size:8.25px;right:287.10px;">2,592</span>
<span class="sb" style="top:246px;line-height:12px;font-size:8.37px;left:745.70px;">$</span>
<span class="sb" style="top:246px;line-height:12px;font-size:8.37px;right:233.10px;">25,597</span>
<svg style="left:0;top:0" width="1024" height="300"><polyline points="798.7,253.2 804.0,253.3 809.2,253.2 814.5,251.4 819.7,254.0 825.0,247.0 830.3,248.6 835.5,243.9 840.8,244.6 846.0,248.6 851.3,245.7 856.5,243.4" fill="none" stroke="#4A6FA8" stroke-width="0.75"/></svg>
<span class="sb" style="top:263px;line-height:12px;font-size:8.37px;left:11.60px;">Total</span>
<span class="sb" style="top:263px;line-height:12px;font-size:8.37px;left:161.70px;">$</span>
<span class="sb" style="top:263px;line-height:12px;font-size:8.37px;right:774.85px;">7,994</span>
<span class="sb" style="top:263px;line-height:12px;font-size:8.37px;left:257.95px;">$</span>
<span class="sb" style="top:263px;line-height:12px;font-size:8.37px;right:715.80px;">9,545</span>
<span class="sb" style="top:263px;line-height:12px;font-size:8.37px;left:317.00px;">$</span>
<span class="sb" style="top:263px;line-height:12px;font-size:8.37px;right:674.10px;">10,107</span>
<span class="sb" style="top:263px;line-height:12px;font-size:8.37px;left:358.70px;">$</span>
<span class="sb" style="top:263px;line-height:12px;font-size:8.37px;right:632.10px;">9,551</span>
<span class="sb" style="top:263px;line-height:12px;font-size:8.37px;left:400.70px;">$</span>
<span class="sb" style="top:263px;line-height:12px;font-size:8.37px;right:590.60px;">10,579</span>
<span class="sb" style="top:263px;line-height:12px;font-size:8.37px;left:442.20px;">$</span>
<span class="sb" style="top:263px;line-height:12px;font-size:8.37px;right:549.10px;">9,955</span>
<span class="sb" style="top:263px;line-height:12px;font-size:8.37px;left:483.70px;">$</span>
<span class="sb" style="top:263px;line-height:12px;font-size:8.37px;right:507.10px;">9,978</span>
<span class="sb" style="top:263px;line-height:12px;font-size:8.37px;left:525.70px;">$</span>
<span class="sb" style="top:263px;line-height:12px;font-size:8.37px;right:465.60px;">10,854</span>
<span class="sb" style="top:263px;line-height:12px;font-size:8.37px;left:567.20px;">$</span>
<span class="sb" style="top:263px;line-height:12px;font-size:8.37px;right:417.85px;">10,262</span>
<span class="sb" style="top:263px;line-height:12px;font-size:8.37px;left:614.95px;">$</span>
<span class="sb" style="top:263px;line-height:12px;font-size:8.37px;right:376.60px;">10,837</span>
<span class="sb" style="top:263px;line-height:12px;font-size:8.37px;left:656.20px;">$</span>
<span class="sb" style="top:263px;line-height:12px;font-size:8.37px;right:331.10px;">10,917</span>
<span class="sb" style="top:263px;line-height:12px;font-size:8.37px;left:701.70px;">$</span>
<span class="sb" style="top:263px;line-height:12px;font-size:8.37px;right:287.10px;">12,378</span>
<span class="sb" style="top:263px;line-height:12px;font-size:8.37px;left:745.70px;">$</span>
<span class="sb" style="top:263px;line-height:12px;font-size:8.37px;right:233.10px;">122,957</span>
<svg style="left:0;top:0" width="1024" height="300"><polyline points="798.7,270.4 804.0,266.8 809.2,265.5 814.5,266.8 819.7,264.4 825.0,265.8 830.3,265.8 835.5,263.7 840.8,265.1 846.0,263.8 851.3,263.6 856.5,260.2" fill="none" stroke="#4A6FA8" stroke-width="0.75"/></svg>
<span class="sb" style="top:280px;line-height:12px;font-size:8.37px;left:11.60px;">Use a cell reference or a single formula where appropriate in order to receive full credit. Do not copy and paste values or type values, as you will not receive full credit for your answers.</span>
<span class="s" style="top:297px;line-height:12px;font-size:8.02px;left:11.60px;">1-2. In merged cells D11-E11, select the data type of "Equipment ID".</span>
<span class="s" style="top:313px;line-height:12px;font-size:8.02px;left:11.60px;">3. In merged cells D12-E12, select the data type of "sales for each month".</span>
<span class="s" style="top:330px;line-height:12px;font-size:8.02px;left:11.60px;">4. In merged cells D13-E13, select the data type of "Equipment".</span>
<span class="s" style="top:346px;line-height:12px;font-size:8.02px;left:11.60px;">5. In cells O3 through O8 in the table above, find the total sales for each equipment.</span>
<span class="s" style="top:358px;line-height:12px;font-size:8.02px;left:11.60px;">6. In cells C9 through N9 in the table above, find the total sales for each month. In cell O9 in the table</span>
<span class="s" style="top:368px;line-height:12px;font-size:8.02px;left:11.60px;">above, find the total sales for the year.</span>
<span class="s" style="top:385px;line-height:12px;font-size:8.02px;left:11.60px;">7. In cells P3 through P9 in the table above, insert Sparklines.</span>
<span class="s" style="top:397px;line-height:12px;font-size:8.02px;left:11.60px;">8. In merged cells D17-E17, is there any trend in the data based on the</span>
<span class="s" style="top:408px;line-height:12px;font-size:8.02px;left:11.60px;">line in cell P9?</span>
<span class="s" style="top:425px;line-height:12px;font-size:8.02px;left:11.60px;">9. In cell D18, find the average sales per month in 2017.</span>
<span class="s" style="top:441px;line-height:12px;font-size:8.02px;left:11.60px;">10. In cell D19, find the median sales per month in 2017.</span>
<span class="s" style="top:452px;line-height:12px;font-size:8.02px;left:11.60px;">11. In merged cells D20-E20, select the shape of the data based on the</span>
<span class="s" style="top:463px;line-height:12px;font-size:8.02px;left:11.60px;">answers in cells D18 and D19.</span>
<span class="s" style="top:480px;line-height:12px;font-size:8.02px;left:11.60px;">12. In cell D21, find the minimum sales per month in 2017.</span>
<span class="s" style="top:497px;line-height:12px;font-size:8.02px;left:11.60px;">13. In cell D22, find the maximum sales per month in 2017.</span>
<span class="s" style="top:513px;line-height:12px;font-size:8.02px;left:11.60px;">14. In cell D23, find the range of sales per month in 2017.</span>
<span class="s" style="top:535px;line-height:12px;font-size:8.02px;left:11.60px;">15. In cells D24 and D25, find Q1 and Q3, respectively, for the sales per</span>
<span class="s" style="top:546px;line-height:12px;font-size:8.02px;left:11.60px;">month in 2017.</span>
<span class="s" style="top:563px;line-height:12px;font-size:8.02px;left:11.60px;">16. In cell D26, find the interquartile range per month in 2017.</span>
<span class="s" style="top:574px;line-height:12px;font-size:8.02px;left:11.60px;">17. In cells D27 through D31, find the five-number summary for the sales</span>
<span class="s" style="top:585px;line-height:12px;font-size:8.02px;left:11.60px;">per month in 2017.</span>
<span class="s" style="top:662px;line-height:12px;font-size:8.02px;left:11.60px;">18. In cell D32, find the standard deviation in sales per month in 2017.</span>
<span class="s" style="top:685px;line-height:12px;font-size:8.02px;left:11.60px;">19. In cell D33, find the variance in sales per month in 2017.</span>
<span class="s" style="top:696px;line-height:12px;font-size:8.02px;left:11.60px;">20. In cell F35 through F40, construct a frequency table for the total sales</span>
<span class="s" style="top:707px;line-height:12px;font-size:8.02px;left:11.60px;">in 2017 for each piece of equipment.</span>
<span class="s" style="top:297px;line-height:12px;font-size:8.02px;left:4.12px;width:600px;text-align:center;">Qualitative-Nominal</span>
<span class="s" style="top:313px;line-height:12px;font-size:8.02px;left:4.12px;width:600px;text-align:center;">Quantitative-Interval</span>
<span class="s" style="top:330px;line-height:12px;font-size:8.02px;left:4.12px;width:600px;text-align:center;">Qualitative-Ordinal</span>
<span class="s" style="top:408px;line-height:12px;font-size:8.02px;left:4.12px;width:600px;text-align:center;">Yes-sales went up</span>
<span class="s" style="top:463px;line-height:12px;font-size:8.02px;left:4.12px;width:600px;text-align:center;">The data is right-skewed.</span>
<span class="s" style="top:425px;line-height:12px;font-size:8.02px;left:258.05px;">$</span>
<span class="s" style="top:425px;line-height:12px;font-size:8.35px;right:715.80px;">10,246.42</span>
<span class="s" style="top:441px;line-height:12px;font-size:8.02px;left:258.05px;">$</span>
<span class="s" style="top:441px;line-height:12px;font-size:8.35px;right:715.80px;">10,184.50</span>
<span class="s" style="top:480px;line-height:12px;font-size:8.02px;left:258.05px;">$</span>
<span class="s" style="top:480px;line-height:12px;font-size:8.35px;right:715.80px;">7,994.00</span>
<span class="s" style="top:497px;line-height:12px;font-size:8.02px;left:258.05px;">$</span>
<span class="s" style="top:497px;line-height:12px;font-size:8.35px;right:715.80px;">12,378.00</span>
<span class="s" style="top:513px;line-height:12px;font-size:8.02px;left:258.05px;">$</span>
<span class="s" style="top:513px;line-height:12px;font-size:8.35px;right:715.80px;">4,384.00</span>
<span class="s" style="top:530px;line-height:12px;font-size:8.02px;left:258.05px;">$</span>
<span class="s" style="top:530px;line-height:12px;font-size:8.35px;right:715.80px;">9,854.00</span>
<span class="s" style="top:546px;line-height:12px;font-size:8.02px;left:258.05px;">$</span>
<span class="s" style="top:546px;line-height:12px;font-size:8.35px;right:715.80px;">10,841.25</span>
<span class="s" style="top:563px;line-height:12px;font-size:8.02px;left:258.05px;">$</span>
<span class="s" style="top:563px;line-height:12px;font-size:8.35px;right:715.80px;">987.25</span>
<span class="s" style="top:579px;line-height:12px;font-size:8.02px;left:258.05px;">$</span>
<span class="s" style="top:579px;line-height:12px;font-size:8.35px;right:715.80px;">12,378.00</span>
<span class="s" style="top:594px;line-height:12px;font-size:8.02px;left:258.05px;">$</span>
<span class="s" style="top:594px;line-height:12px;font-size:8.35px;right:715.80px;">10,841.25</span>
<span class="s" style="top:611px;line-height:12px;font-size:8.02px;left:258.05px;">$</span>
<span class="s" style="top:611px;line-height:12px;font-size:8.35px;right:715.80px;">10,184.50</span>
<span class="s" style="top:627px;line-height:12px;font-size:8.02px;left:258.05px;">$</span>
<span class="s" style="top:627px;line-height:12px;font-size:8.35px;right:715.80px;">9,854.00</span>
<span class="s" style="top:643px;line-height:12px;font-size:8.02px;left:258.05px;">$</span>
<span class="s" style="top:643px;line-height:12px;font-size:8.35px;right:715.80px;">7,994.00</span>
<span class="s" style="top:662px;line-height:12px;font-size:8.02px;left:258.05px;">$</span>
<span class="s" style="top:662px;line-height:12px;font-size:8.35px;right:715.80px;">1,046.53</span>
<span class="s" style="top:685px;line-height:12px;font-size:8.02px;left:257.60px;">$</span>
<span class="s" style="top:685px;line-height:11px;font-size:7.65px;right:715.80px;">1,095,228.08</span>
<span class="sb" style="top:702px;line-height:12px;font-size:8.37px;left:255.15px;">Equipment</span>
<span class="sb" style="top:702px;line-height:12px;font-size:8.37px;left:355.90px;">Percentage</span>
<span class="s" style="top:719px;line-height:12px;font-size:8.02px;left:255.15px;">Balls</span>
<span class="s" style="top:735px;line-height:12px;font-size:8.02px;left:255.15px;">Goals</span>
<span class="s" style="top:752px;line-height:12px;font-size:8.02px;left:255.15px;">Nets</span>
<span class="s" style="top:768px;line-height:12px;font-size:8.02px;left:255.15px;">Racquets</span>
<span class="s" style="top:785px;line-height:12px;font-size:8.02px;left:255.15px;">Rods and tackle</span>
<div style="left:1012.00px;top:113.00px;width:12.00px;height:681.50px;background:#E6E6E6;"></div>
<div style="left:1012.00px;top:124.50px;width:9.80px;height:663.00px;background:#D2D2D2;"></div>
<div style="left:1012.00px;top:124.50px;width:2.00px;height:663.00px;background:#E9E9E9;"></div>
<div style="left:1013.80px;top:124.50px;width:7.60px;height:351.50px;background:#fff;border:0.5px solid #D6D6D6;"></div>
<div style="left:1014.20px;top:115.30px;width:7.20px;height:7.60px;background:#fff;border:0.5px solid #D0D0D0;"></div>
<svg style="left:1015.3px;top:117.3px" width="5" height="4"><path d="M0.3 3.2L2.5 0.8L4.7 3.2Z" fill="#555"/></svg>
<div style="left:1014.20px;top:787.00px;width:7.20px;height:7.40px;background:#fff;border:0.5px solid #D0D0D0;"></div>
<svg style="left:1015.3px;top:789.2px" width="5" height="4"><path d="M0.3 0.6L2.5 3L4.7 0.6Z" fill="#555"/></svg>
<div style="left:0.00px;top:794.30px;width:1024.00px;height:15.20px;background:#E6E6E6;"></div>
<div style="left:0.00px;top:793.80px;width:1012.00px;height:1.00px;background:#D4D4D4;"></div>
<span class="u" style="top:798px;line-height:7px;font-size:4.6px;left:-288.00px;width:600px;text-align:center;color:#C0C0C0;">◀</span>
<span class="u" style="top:798px;line-height:7px;font-size:4.6px;left:-273.00px;width:600px;text-align:center;color:#C0C0C0;">▶</span>
<div style="left:50.00px;top:797.00px;width:1.00px;height:10.00px;background:#CFCFCF;"></div>
<span class="u" style="top:797px;line-height:10px;font-size:6.84px;left:58.00px;color:#555;">Instructions</span>
<div style="left:102.00px;top:794.30px;width:46.80px;height:13.00px;background:#fff;"></div>
<div style="left:102.00px;top:806.90px;width:46.80px;height:1.40px;background:#217346;"></div>
<div style="left:148.40px;top:795.00px;width:1.00px;height:13.00px;background:#C6C6C6;"></div>
<span class="ub" style="top:797px;line-height:10px;font-size:6.72px;left:108.30px;color:#217346;">Sales Data</span>
<svg style="left:166px;top:797px" width="10" height="10"><circle cx="4.6" cy="4.9" r="3.6" fill="none" stroke="#777" stroke-width="0.7"/><path d="M2.6 4.9H6.6M4.6 2.9V6.9" stroke="#777" stroke-width="0.8"/></svg>
<span class="u" style="top:797px;line-height:10px;font-size:7px;left:313.00px;width:600px;text-align:center;color:#9A9A9A;">⋮</span>
<div style="left:622.00px;top:798.00px;width:390.00px;height:8.40px;background:#D6D6D6;"></div>
<div style="left:622.00px;top:798.00px;width:7.50px;height:8.30px;background:#fff;border:0.5px solid #CFCFCF;"></div>
<svg style="left:624px;top:800px" width="4" height="5"><path d="M3.5 0L0.5 2.5L3.5 5Z" fill="#555"/></svg>
<div style="left:630.00px;top:798.60px;width:355.00px;height:7.40px;background:#fff;border:0.5px solid #C4C4C4;"></div>
<div style="left:1004.00px;top:798.00px;width:7.50px;height:8.30px;background:#fff;border:0.5px solid #CFCFCF;"></div>
<svg style="left:1006.3px;top:800px" width="4" height="5"><path d="M0.5 0L3.5 2.5L0.5 5Z" fill="#555"/></svg>
<div style="left:0.00px;top:809.50px;width:1024.00px;height:12.00px;background:#F3F2F1;"></div>
<div style="left:0.00px;top:808.90px;width:1024.00px;height:1.00px;background:#E1DFDD;"></div>
<span class="u" style="top:812px;line-height:9px;font-size:6.0px;left:0.38px;color:#444;">Ready</span>
<div style="left:857.00px;top:810.50px;width:21.00px;height:10.50px;background:#D4D2D0;"></div>
<svg style="left:862px;top:811px" width="80" height="10">
<g fill="none" stroke="#444" stroke-width="0.7"><rect x="2.5" y="1.8" width="6" height="6"/><path d="M4.5 1.8V7.8M6.5 1.8V7.8M2.5 3.8H8.5M2.5 5.8H8.5"/>
<rect x="23.5" y="1.8" width="6.4" height="6"/><rect x="25.3" y="3" width="2.8" height="4.8"/>
<path d="M45 7.8H52M46 1.8H51V6H46Z"/></g></svg>
<span class="u" style="top:810px;line-height:10px;font-size:7px;left:626.00px;width:600px;text-align:center;color:#444;">–</span>
<div style="left:931.00px;top:815.20px;width:54.00px;height:0.80px;background:#A8A8A8;"></div>
<div style="left:957.30px;top:812.20px;width:2.40px;height:6.60px;background:#555;"></div>
<span class="u" style="top:810px;line-height:11px;font-size:8px;left:689.50px;width:600px;text-align:center;color:#444;">+</span>
<span class="u" style="top:812px;line-height:9px;font-size:5.67px;left:999.00px;color:#444;">100%</span>
<div style="left:1023.00px;top:0.00px;width:1.00px;height:821.50px;background:#6FA589;"></div>
<div style="left:0.00px;top:820.95px;width:1024.00px;height:1.10px;background:#3C8C63;"></div>
<div style="left:0.00px;top:822.00px;width:1024.00px;height:16.00px;background:linear-gradient(90deg,#D7E5EC 0%,#D3DFEC 45%,#D4DCEC 100%);"></div>
<div style="left:1021.10px;top:822.00px;width:0.80px;height:16.00px;background:#B4BDCB;"></div>
<svg style="left:910px;top:823px" width="114" height="14"><g fill="none" stroke="#2A2A2A" stroke-width="0.75">
<path d="M5 8.5L7.7 5.8L10.4 8.5"/>
<path d="M17.5 9.8h5.2a1.9 1.9 0 0 0 .3-3.7a2.6 2.6 0 0 0-4.9-.6a2.2 2.2 0 0 0-.6 4.3z"/>
<path d="M30.5 4.5h5.5v4h-5.5zM32 10.5h6.5M29.5 3.5v7"/>
<path d="M43.5 6h1.4l1.8-1.8v6L44.9 8.4h-1.4zM48.3 5.2a3 3 0 0 1 0 4M49.7 4a4.6 4.6 0 0 1 0 6.4"/>
<path d="M92.5 3.5h8v7h-5.5l-2.5 0z"/><path d="M98 10.5l2.5 -2.5" /></g></svg>
<span class="u" style="top:826px;line-height:9px;font-size:5.96px;left:966.50px;color:#333;">12:12 PM</span>
</div></body></html>
